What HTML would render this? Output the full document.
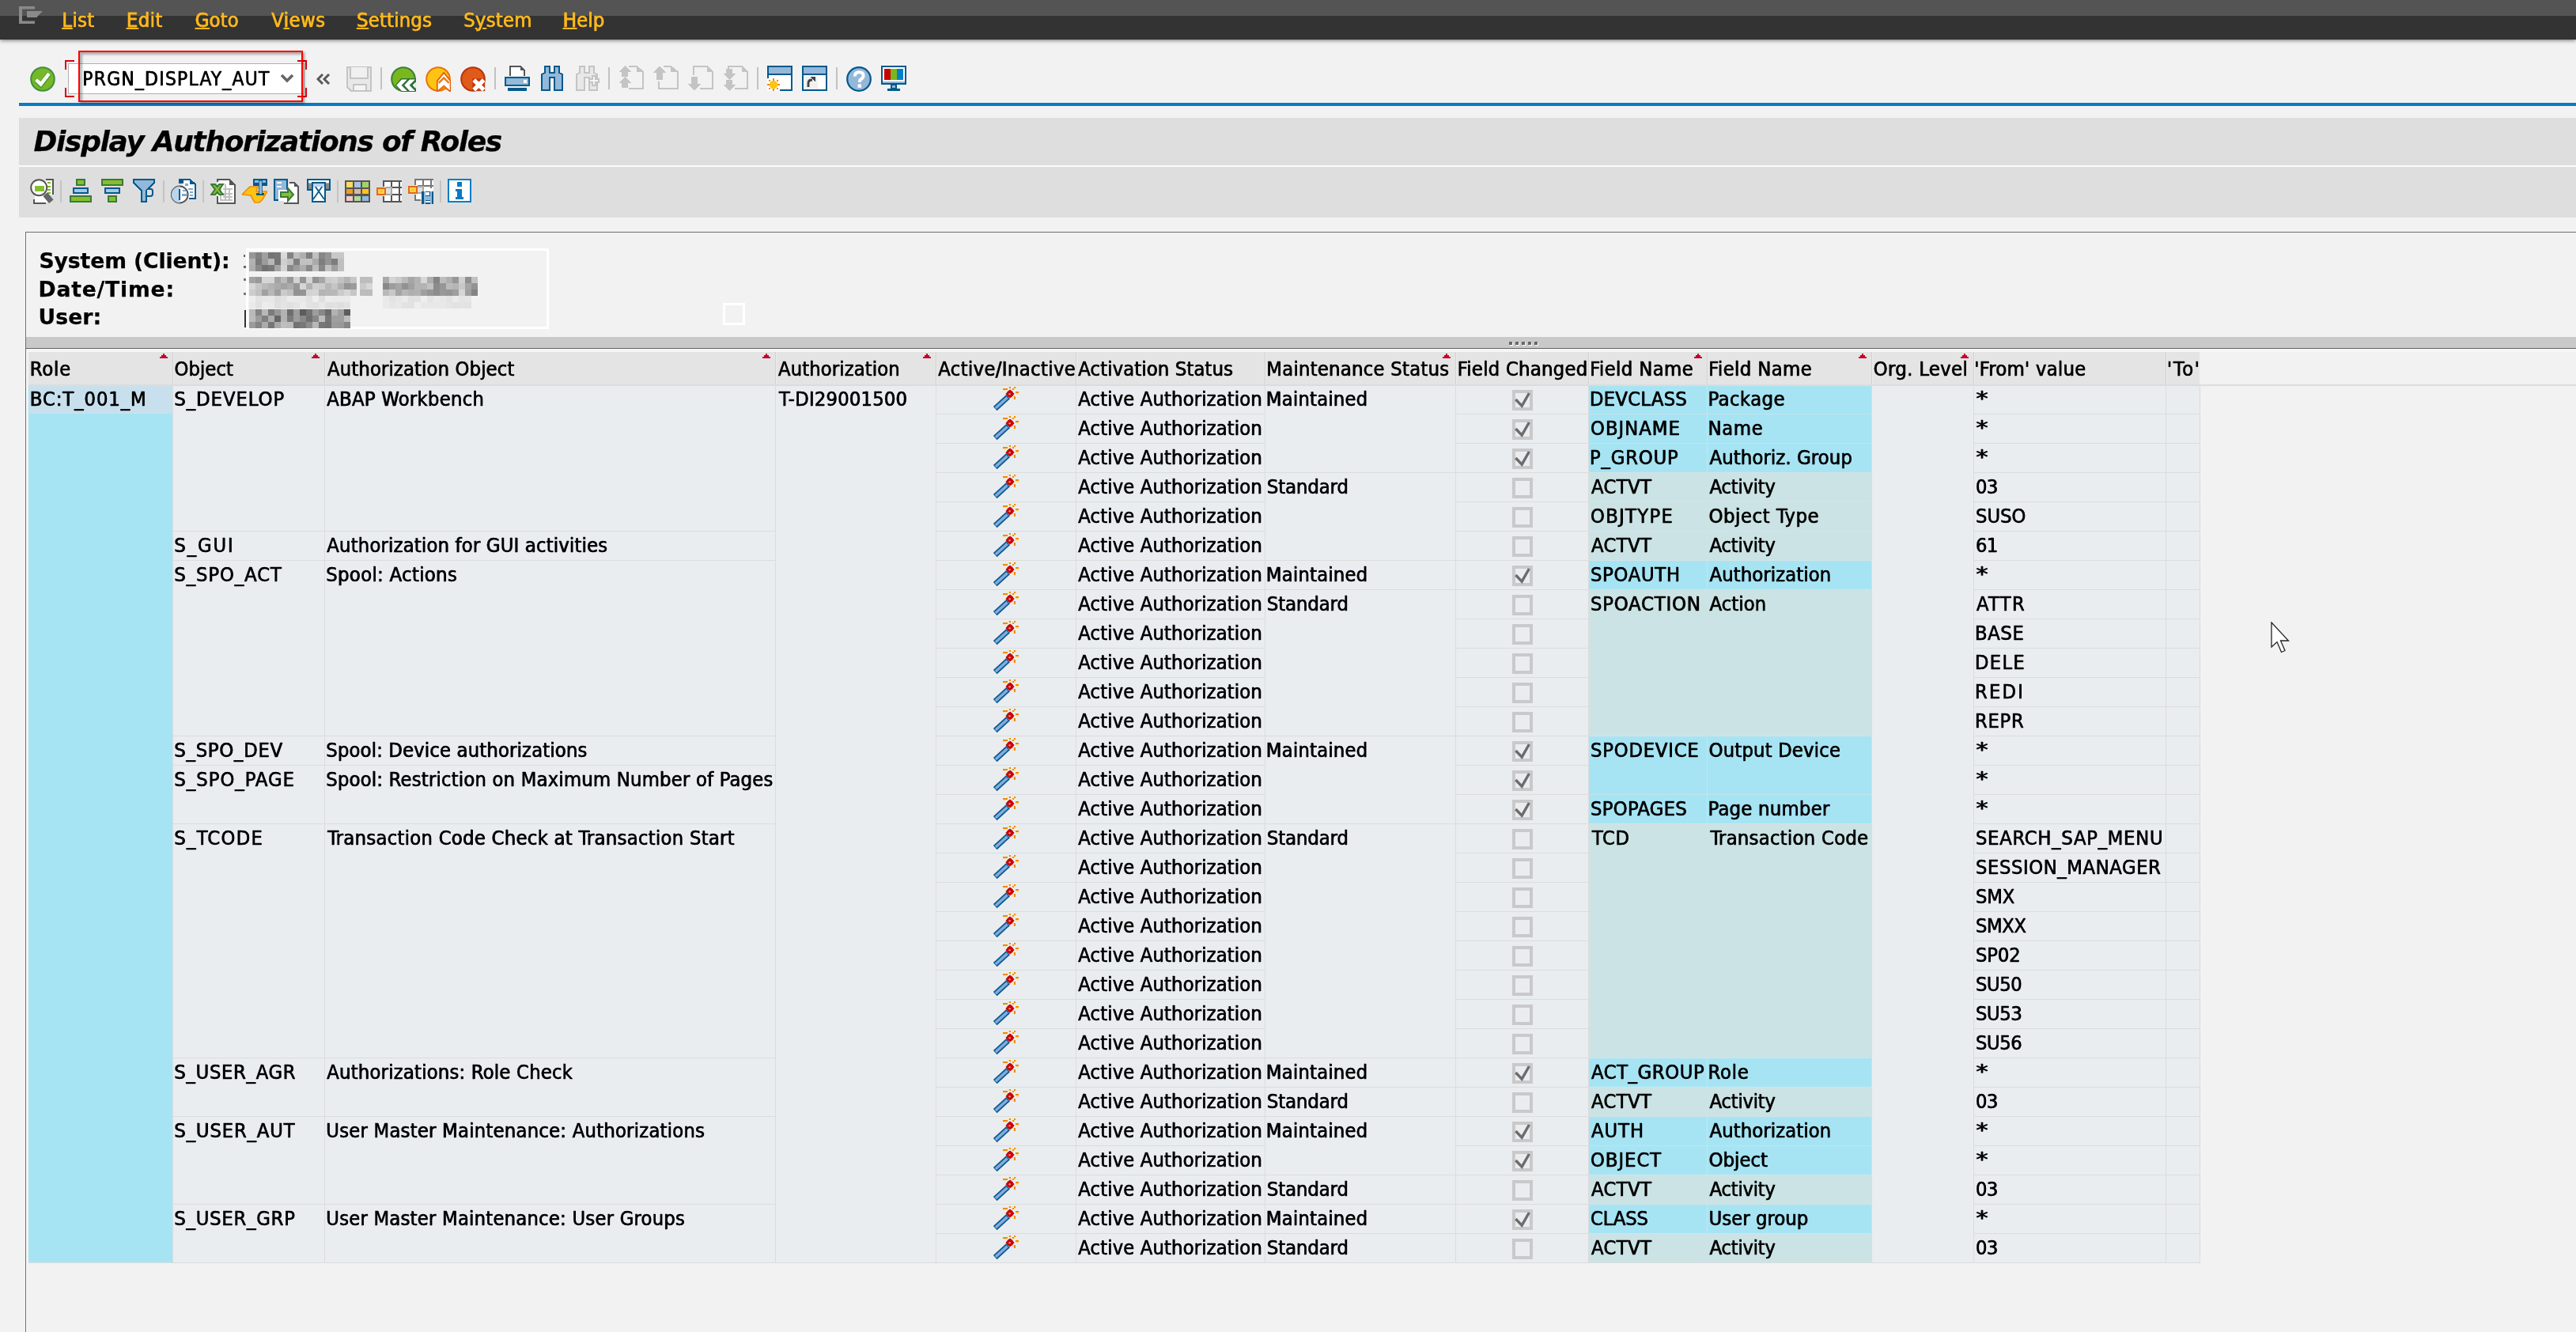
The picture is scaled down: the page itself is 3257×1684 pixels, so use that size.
<!DOCTYPE html>
<html><head><meta charset="utf-8"><title>Display Authorizations of Roles</title>
<style>
html,body{margin:0;padding:0}
body{width:3257px;height:1684px;background:#f2f2f2;position:relative;overflow:hidden;font-family:'DejaVu Sans Condensed','DejaVu Sans','Liberation Sans',sans-serif;font-stretch:condensed}
body div{position:absolute}
.t{position:absolute;white-space:pre;display:block;-webkit-text-stroke:0.3px #000;text-shadow:0.6px 0 0 currentColor}
svg{display:block}
u{text-decoration:underline;text-decoration-thickness:1.5px;text-underline-offset:1px}
#tx{left:0;top:0;width:3257px;height:1684px;will-change:transform}
</style></head><body>
<div style="left:0px;top:0px;width:3257px;height:50px;background:linear-gradient(#545454 0,#545454 20px,#333 20px,#333 100%);box-shadow:0 1px 5px rgba(0,0,0,.55);"></div>
<div style="left:24px;top:8px"><svg width="31" height="22" viewBox="0 0 31 22"><path d="M20 0 H0 V22 H20 V18.5 H4 V3.5 H20 Z" fill="#8a8a8a"/><path d="M10 6 H30 L23 13 V14 H10 Z" fill="#8a8a8a"/></svg></div>
<div style="left:24px;top:130px;width:3233px;height:4px;background:#0a7ac2;"></div>
<div style="left:38px;top:84px"><svg width="32" height="32" viewBox="0 0 16 16"><circle cx="8" cy="8" r="7.4" fill="#76b82a" stroke="#3f8f3c" stroke-width="1"/><path d="M3.6 8.6 L6.8 11.6 L12.2 4.6" fill="none" stroke="#4c9a2a" stroke-width="3.2"/><path d="M3.8 8.4 L6.8 11.2 L12 4.6" fill="none" stroke="#fff" stroke-width="2.2"/></svg></div>
<div style="left:86px;top:80px;width:299px;height:39px;background:#fff;border:1px solid #b0b0b0;box-sizing:border-box;"></div>
<div style="left:82px;top:76px;width:12px;height:12px;background:transparent;box-sizing:border-box;border-left:2px solid #d8000f;border-top:2px solid #d8000f;"></div>
<div style="left:82px;top:111px;width:12px;height:12px;background:transparent;box-sizing:border-box;border-left:2px solid #d8000f;border-bottom:2px solid #d8000f;"></div>
<div style="left:376px;top:76px;width:12px;height:12px;background:transparent;box-sizing:border-box;border-right:2px solid #d8000f;border-top:2px solid #d8000f;"></div>
<div style="left:376px;top:111px;width:12px;height:12px;background:transparent;box-sizing:border-box;border-right:2px solid #d8000f;border-bottom:2px solid #d8000f;"></div>
<div style="left:99px;top:64px;width:284px;height:65px;background:transparent;box-sizing:border-box;border:2px solid #f00;box-shadow:inset 3px 3px 3px rgba(0,0,0,.28), 2px 2px 3px rgba(0,0,0,.35);"></div>
<div style="left:354px;top:92px"><svg width="18" height="13" viewBox="0 0 18 13"><path d="M2 3 L9 10 L16 3" fill="none" stroke="#666" stroke-width="3.6"/></svg></div>
<div style="left:400px;top:93px"><svg width="18" height="14" viewBox="0 0 18 14"><path d="M8 1 L2 7 L8 13 M16 1 L10 7 L16 13" fill="none" stroke="#595959" stroke-width="3"/></svg></div>
<div style="left:438px;top:84px"><svg width="32" height="32" viewBox="0 0 16 16" shape-rendering="crispEdges"><path d="M0.5 0.5 H15.5 V15.5 H3 L0.5 13 Z" fill="#e8e8e8" stroke="#c4c4c4"/><path d="M2.5 0.5 V7.5 H13.5 V0.5" fill="#f0f0f0" stroke="#c4c4c4"/><rect x="4.5" y="11.5" width="8" height="4" fill="#f4f4f4" stroke="#c4c4c4"/></svg></div>
<div style="left:481px;top:85px;width:2px;height:28px;background:#c2c2c2;"></div>
<div style="left:494px;top:84px"><svg width="32" height="32" viewBox="0 0 16 16"><circle cx="8" cy="8" r="7.4" fill="#7ab71f" stroke="#3a8038"/><path d="M6.6 7.5 H16 V16 H6.6 L2.8 11.9 Z" fill="#2f7038"/><path d="M7 8.2 H10.4 L6.8 11.9 L10.4 15.5 H7 L3.6 11.9 Z M12 8.2 H15.4 L11.8 11.9 L15.4 15.5 H12 L8.6 11.9 Z M15.9 9.8 V14 L13.8 11.9 Z" fill="#fff"/></svg></div>
<div style="left:538px;top:84px"><svg width="32" height="32" viewBox="0 0 16 16"><circle cx="8" cy="8" r="7.4" fill="#fdc414" stroke="#e9720c"/><path d="M7.4 9.2 L11.6 4 L15.8 9.2 V16 L11.6 12.4 L7.4 16 Z" fill="#fff" stroke="#e4600a" stroke-width="0.9"/><path d="M8.4 10.4 L11.6 7.2 L14.8 10.4" fill="none" stroke="#ec7a0c" stroke-width="1.2"/><path d="M9.6 14.6 L11.6 12.6 L13.6 14.6" fill="none" stroke="#ec7a0c" stroke-width="1"/></svg></div>
<div style="left:582px;top:84px"><svg width="32" height="32" viewBox="0 0 16 16"><circle cx="8" cy="8" r="7.4" fill="#df5b17" stroke="#b8320e"/><rect x="7.6" y="7.6" width="8" height="8" fill="#c23a10"/><path d="M8.6 8.6 L14.8 14.8 M14.8 8.6 L8.6 14.8" stroke="#fff" stroke-width="2.6"/></svg></div>
<div style="left:625px;top:85px;width:2px;height:28px;background:#c2c2c2;"></div>
<div style="left:638px;top:83px"><svg width="32" height="32" viewBox="0 0 16 16" shape-rendering="crispEdges"><path d="M3.5 6.5 V0.5 H10 L12.5 3 V6.5" fill="#fff" stroke="#555"/><path d="M10 0.5 V3 H12.5 Z" fill="#555"/><rect x="0.5" y="7.5" width="15" height="5" fill="#94b8da" stroke="#00598c"/><rect x="12" y="9" width="2" height="2" fill="#fff"/><rect x="2" y="14" width="12" height="2" fill="#00598c"/></svg></div>
<div style="left:684px;top:83px"><svg width="28" height="32" viewBox="0 0 14 16" shape-rendering="crispEdges"><path d="M2.5 0.5 H5.5 V4.5 H8.5 V0.5 H11.5 V4.5 L13.5 5.5 V15.5 H8.5 V7.5 H5.5 V15.5 H0.5 V5.5 L2.5 4.5 Z" fill="#94b8da" stroke="#00598c"/></svg></div>
<div style="left:728px;top:83px"><svg width="30" height="32" viewBox="0 0 15 16" shape-rendering="crispEdges"><path d="M2.5 0.5 H5.5 V4.5 H8.5 V0.5 H11.5 V4.5 L13.5 5.5 V15.5 H8.5 V7.5 H5.5 V15.5 H0.5 V5.5 L2.5 4.5 Z" fill="#e8e8e8" stroke="#c4c4c4"/><path d="M10.5 6.5 H12.5 V8.5 H14.5 V10.5 H12.5 V12.5 H10.5 V10.5 H8.5 V8.5 H10.5 Z" fill="#f4f4f4" stroke="#c4c4c4"/></svg></div>
<div style="left:769px;top:85px;width:2px;height:28px;background:#c2c2c2;"></div>
<div style="left:782px;top:83px"><svg width="32" height="32" viewBox="0 0 16 16" shape-rendering="crispEdges"><path d="M6.5 0.5 H11.5 L15.5 4 V14.5 H6.5" fill="none" stroke="#c4c4c4"/><path d="M11.5 0.5 V4 H15.5 Z" fill="#c4c4c4"/><path d="M4 0 L8 4 H6 V7 H2 V4 H0 Z" fill="#c4c4c4"/><path d="M4 7 L8 11 H6 V14 H2 V11 H0 Z" fill="#c4c4c4"/></svg></div>
<div style="left:826px;top:83px"><svg width="32" height="32" viewBox="0 0 16 16" shape-rendering="crispEdges"><path d="M6.5 0.5 H11 L15.5 4 V14.5 H3.5 V10" fill="none" stroke="#c4c4c4"/><path d="M11 0.5 V4 H15.5 Z" fill="#c4c4c4"/><path d="M4 0 L8 4.5 H6 V9 H2 V4.5 H0 Z" fill="#c4c4c4"/></svg></div>
<div style="left:870px;top:83px"><svg width="32" height="32" viewBox="0 0 16 16" shape-rendering="crispEdges"><path d="M3.5 6 V0.5 H12 L15.5 4 V14.5 H7.5" fill="none" stroke="#c4c4c4"/><path d="M12 0.5 V4 H15.5 Z" fill="#c4c4c4"/><path d="M4 16 L8 11.5 H6 V7 H2 V11.5 H0 Z" fill="#c4c4c4"/></svg></div>
<div style="left:914px;top:83px"><svg width="32" height="32" viewBox="0 0 16 16" shape-rendering="crispEdges"><path d="M3.5 2 V0.5 H12 L15.5 4 V14.5 H7.5" fill="none" stroke="#c4c4c4"/><path d="M12 0.5 V4 H15.5 Z" fill="#c4c4c4"/><path d="M4 9 L8 5 H6 V2 H2 V5 H0 Z" fill="#c4c4c4"/><path d="M4 16 L8 12 H6 V9 H2 V12 H0 Z" fill="#c4c4c4"/></svg></div>
<div style="left:957px;top:85px;width:2px;height:28px;background:#c2c2c2;"></div>
<div style="left:970px;top:83px"><svg width="32" height="32" viewBox="0 0 16 16" shape-rendering="crispEdges"><rect x="0.5" y="0.5" width="15" height="15" fill="#fff" stroke="#00598c"/><rect x="1" y="1" width="14" height="4" fill="#94b8da"/><rect x="0" y="5" width="16" height="1" fill="#00598c"/><rect x="0" y="8" width="8" height="8" fill="#f2f2f2"/><rect x="0" y="8" width="8" height="8" fill="#fff"/><circle cx="4" cy="12" r="2.6" fill="#fdc414" shape-rendering="auto"/><g fill="#f08c0a"><rect x="3.4" y="8" width="1.2" height="1.4"/><rect x="3.4" y="14.6" width="1.2" height="1.4"/><rect x="0" y="11.4" width="1.4" height="1.2"/><rect x="6.6" y="11.4" width="1.4" height="1.2"/><rect x="1" y="9" width="1.2" height="1.2"/><rect x="5.8" y="9" width="1.2" height="1.2"/><rect x="1" y="13.8" width="1.2" height="1.2"/><rect x="5.8" y="13.8" width="1.2" height="1.2"/></g></svg></div>
<div style="left:1014px;top:83px"><svg width="32" height="32" viewBox="0 0 16 16" shape-rendering="crispEdges"><rect x="0.5" y="0.5" width="15" height="15" fill="#fff" stroke="#00598c"/><rect x="1" y="1" width="14" height="4" fill="#94b8da"/><rect x="0" y="5" width="16" height="1" fill="#00598c"/><rect x="2" y="7" width="8" height="8" fill="#f0f0f0"/><path d="M4 13.5 V11 Q4 9 6.5 9" fill="none" stroke="#444" stroke-width="1.4" shape-rendering="auto"/><path d="M5 7 H8.4 V10.4 Z" fill="#444"/></svg></div>
<div style="left:1057px;top:85px;width:2px;height:28px;background:#c2c2c2;"></div>
<div style="left:1070px;top:84px"><svg width="32" height="32" viewBox="0 0 16 16"><circle cx="8" cy="8" r="7.4" fill="#94b8da" stroke="#00598c" stroke-width="1.1"/><path d="M5.4 6.2 Q5.4 3.6 8.2 3.6 Q10.8 3.6 10.8 5.8 Q10.8 7.2 9.4 8 Q8.4 8.6 8.4 10" fill="none" stroke="#fff" stroke-width="2"/><rect x="7.3" y="11.2" width="2.2" height="2.2" fill="#fff"/></svg></div>
<div style="left:1114px;top:83px"><svg width="32" height="32" viewBox="0 0 16 16" shape-rendering="crispEdges"><rect x="0.5" y="0.5" width="15" height="11" fill="#fff" stroke="#00598c"/><rect x="1" y="10" width="14" height="1" fill="#94b8da"/><rect x="2" y="2" width="4" height="7" fill="#cc0000"/><rect x="6" y="2" width="4" height="7" fill="#78b71e"/><rect x="10" y="2" width="4" height="7" fill="#0080c8"/><rect x="6.5" y="12" width="3" height="2.5" fill="#94b8da" stroke="#00598c"/><rect x="4" y="14.5" width="8" height="1.5" fill="#00598c"/></svg></div>
<div style="left:24px;top:149px;width:3233px;height:60px;background:#dedede;"></div>
<div style="left:24px;top:209px;width:3233px;height:2px;background:#fbfbfb;"></div>
<div style="left:24px;top:211px;width:3233px;height:64px;background:#dedede;"></div>
<div style="left:38px;top:226px"><svg width="32" height="32" viewBox="0 0 16 16" shape-rendering="crispEdges"><path d="M10 0.5 H14.5 V10 M2.5 13 V15.5 H10" fill="none" stroke="#555"/><rect x="10" y="1" width="4" height="9" fill="#fff"/><rect x="3" y="10" width="8" height="5" fill="#fff"/><g fill="#7ab71f"><rect x="11" y="2" width="2" height="1"/><rect x="11" y="4.5" width="2" height="1"/><rect x="11" y="6.5" width="2" height="1"/><rect x="11" y="8.5" width="2" height="1"/></g><circle cx="5.6" cy="5.6" r="5" fill="#fff" stroke="#555" stroke-width="1" shape-rendering="auto"/><rect x="3" y="4.5" width="6" height="3.5" fill="#86bf2e"/><path d="M9.6 9.8 L13.4 14.4" stroke="#666" stroke-width="3.6" shape-rendering="auto"/></svg></div>
<div style="left:76px;top:228px;width:2px;height:28px;background:#c4c4c4;"></div>
<div style="left:88px;top:226px"><svg width="28" height="32" viewBox="0 0 14 16" shape-rendering="crispEdges"><rect x="4.5" y="0.5" width="5" height="3.5" fill="#86bf2e" stroke="#3a7a3a"/><rect x="2.5" y="6.0" width="9" height="3" fill="#a9c7e5" stroke="#00598c"/><rect x="0.5" y="11.0" width="13" height="3.5" fill="#86bf2e" stroke="#3a7a3a"/></svg></div>
<div style="left:128px;top:226px"><svg width="28" height="32" viewBox="0 0 14 16" shape-rendering="crispEdges"><rect x="0.5" y="0.5" width="13" height="3.5" fill="#86bf2e" stroke="#3a7a3a"/><rect x="2.5" y="6.0" width="9" height="3" fill="#a9c7e5" stroke="#00598c"/><rect x="4.5" y="11.0" width="5" height="3.5" fill="#86bf2e" stroke="#3a7a3a"/></svg></div>
<div style="left:168px;top:226px"><svg width="28" height="32" viewBox="0 0 14 16" shape-rendering="crispEdges"><path d="M0.5 0.5 H13.5 V2.5 L8.5 7.5 V14.5 H5.5 V7.5 L0.5 2.5 Z" fill="#94b8da" stroke="#00598c"/><path d="M9 6.5 H11.5 Q12.5 6.5 12.5 8 V9.5 Q12.5 11 11 11 H9" fill="#e0e0e0" stroke="#00598c" shape-rendering="auto"/></svg></div>
<div style="left:206px;top:228px;width:2px;height:28px;background:#c4c4c4;"></div>
<div style="left:216px;top:226px"><svg width="32" height="32" viewBox="0 0 16 16" shape-rendering="crispEdges"><path d="M5.5 0.5 H12 L15.5 3.5 V12.5 H11.5" fill="#fff" stroke="#00598c"/><path d="M5 0 H8 V3 H5 Z" fill="#00598c"/><path d="M12 0.5 V3.5 H15.5 Z" fill="#00598c"/><g fill="#7fa8cc"><rect x="9" y="3" width="2" height="1.4"/><rect x="11" y="6" width="3" height="1"/><rect x="12" y="8" width="2" height="1"/><rect x="12" y="10" width="2" height="1"/></g><circle cx="5.6" cy="10" r="5.2" fill="#fff" stroke="#555" shape-rendering="auto"/><path d="M5.6 4.8 A5.2 5.2 0 0 0 5.6 15.2 Z" fill="#bcd4ea" shape-rendering="auto"/><rect x="5" y="6.5" width="1.2" height="7" fill="#00598c"/><rect x="7" y="9.5" width="3" height="1.6" fill="#7fa8cc"/><rect x="7.5" y="7" width="2" height="1" fill="#7fa8cc"/></svg></div>
<div style="left:256px;top:228px;width:2px;height:28px;background:#c4c4c4;"></div>
<div style="left:266px;top:226px"><svg width="32" height="32" viewBox="0 0 16 16" shape-rendering="crispEdges"><path d="M4.5 2 V0.5 H12 L15.5 4 V15.5 H4.5 V11" fill="#fff" stroke="#555"/><path d="M12 0.5 V4 H15.5 Z" fill="#555"/><g stroke="#c0c0c0" fill="none"><path d="M6.5 4 V13.5 H14 M9.5 3.5 V13.5 M12 6 V13.5 M8 6.5 H14 M8 9.5 H14 M8 11.5 H14"/></g><path d="M0.5 3.5 H3 L4.3 5 L5.6 3.5 H8 L5.6 6.8 L8 10 H5.6 L4.3 8.4 L3 10 H0.5 L3 6.8 Z" fill="#86bf2e" stroke="#3a7a3a" shape-rendering="auto"/></svg></div>
<div style="left:306px;top:226px"><svg width="32" height="32" viewBox="0 0 16 16" shape-rendering="crispEdges"><path d="M0 10 L5 5 H10 L9 8 H16 L13 13 L11 15 H8 L5.5 10.5 Z" fill="#fdc414" stroke="#f08c0a" stroke-width="0.8" shape-rendering="auto"/><rect x="7" y="0" width="9" height="4.5" fill="#00598c"/><rect x="9" y="9" width="5" height="1.6" fill="#00598c"/><rect x="8" y="1" width="7" height="1.5" fill="#94b8da"/><rect x="10.5" y="1" width="2" height="8.5" fill="#94b8da" stroke="#00598c" stroke-width="0.4"/></svg></div>
<div style="left:346px;top:226px"><svg width="32" height="32" viewBox="0 0 16 16" shape-rendering="crispEdges"><path d="M10 2.5 H13 L15.5 5 V15.5 H6.5" fill="#fff" stroke="#555"/><path d="M13 2.5 V5 H15.5 Z" fill="#555"/><path d="M0.5 0.5 H8.5 V13.5 H0.5 Z" fill="#94b8da" stroke="#00598c"/><rect x="3" y="7" width="6" height="7" fill="#fff"/><rect x="2" y="2" width="3" height="1" fill="#fff"/><rect x="2" y="4.5" width="3" height="1" fill="#fff"/><path d="M4.5 8.5 H9 V6 L12.5 10 L9 14 V11.5 H4.5 Z" fill="#86bf2e" stroke="#3a7a3a" shape-rendering="auto"/></svg></div>
<div style="left:388px;top:226px"><svg width="30" height="32" viewBox="0 0 15 16" shape-rendering="crispEdges"><rect x="0.5" y="0.5" width="14" height="6.5" fill="#94b8da" stroke="#00598c"/><rect x="1" y="1" width="13" height="1.4" fill="#fff"/><rect x="1" y="3" width="2" height="3.5" fill="#888"/><rect x="12" y="3" width="2" height="3.5" fill="#888"/><rect x="3.5" y="2.5" width="8" height="12" fill="#fff" stroke="#00598c"/><path d="M4 3 L11 13 M11 3 L4 13" stroke="#00598c" stroke-width="0.9" shape-rendering="auto"/><rect x="4" y="3" width="7" height="2" fill="#bcd4ea"/></svg></div>
<div style="left:426px;top:228px;width:2px;height:28px;background:#c4c4c4;"></div>
<div style="left:436px;top:228px"><svg width="32" height="28" viewBox="0 0 16 14" shape-rendering="crispEdges"><rect x="0" y="0" width="16" height="14" fill="#555"/><rect x="1" y="1.0" width="4" height="3.3" fill="#ffd966"/><rect x="6" y="1.0" width="4" height="3.3" fill="#a6c4e2"/><rect x="11" y="1.0" width="4" height="3.3" fill="#a4d16c"/><rect x="1" y="5.4" width="4" height="3.3" fill="#f39c1a"/><rect x="6" y="5.4" width="4" height="3.3" fill="#d9b8ac"/><rect x="11" y="5.4" width="4" height="3.3" fill="#fdc414"/><rect x="1" y="9.8" width="4" height="3.3" fill="#f7c8cc"/><rect x="6" y="9.8" width="4" height="3.3" fill="#acd99c"/><rect x="11" y="9.8" width="4" height="3.3" fill="#94b8da"/></svg></div>
<div style="left:476px;top:228px"><svg width="32" height="28" viewBox="0 0 16 14" shape-rendering="crispEdges"><rect x="4.5" y="0.5" width="11.5" height="13" fill="#fff"/><path d="M4.5 4 V0.5 H16 M4.5 10 V13.5 H16 M9.5 0.5 V13.5 M14.5 0.5 V13.5 M6 4.5 H16 M6 9 H16" fill="none" stroke="#555"/><path d="M6 4.5 H9.5 V9 H6" fill="#e0e0e0" stroke="#aaa"/><rect x="0.5" y="5" width="5" height="4" fill="#ffd24a" stroke="#e06a1c"/><rect x="2" y="6.5" width="2" height="1" fill="#fdc414"/></svg></div>
<div style="left:516px;top:226px"><svg width="32" height="32" viewBox="0 0 16 16" shape-rendering="crispEdges"><rect x="4.5" y="0.5" width="11.5" height="13" fill="#fff"/><path d="M4.5 4 V0.5 H16 M4.5 10 V13.5 H8 M9.5 0.5 V6 M14.5 0.5 V6 M6 4.5 H16" fill="none" stroke="#777"/><path d="M6 5 H9.5 V9 H6" fill="#e0e0e0" stroke="#aaa"/><rect x="0.5" y="5" width="5" height="4" fill="#ffd24a" stroke="#e06a1c"/><rect x="2" y="6.5" width="2" height="1" fill="#fdc414"/><rect x="8.5" y="8" width="7.5" height="8" fill="#00598c"/><rect x="10" y="8" width="1" height="8" fill="#94b8da"/><rect x="14" y="8" width="1" height="8" fill="#94b8da"/><rect x="10" y="11" width="5" height="2.6" fill="#94b8da"/><rect x="11" y="8.6" width="2.4" height="2" fill="#fff"/><rect x="11" y="14" width="3" height="1" fill="#fff"/></svg></div>
<div style="left:556px;top:228px;width:2px;height:28px;background:#c4c4c4;"></div>
<div style="left:566px;top:226px"><svg width="30" height="30" viewBox="0 0 15 15" shape-rendering="crispEdges"><rect x="0.5" y="0.5" width="14" height="14" fill="#fff" stroke="#007cc5"/><rect x="6" y="2" width="3" height="3" fill="#007cc5"/><path d="M5 6.5 H9 V11.5 H10 V13 H5 V11.5 H6 V8 H5 Z" fill="#007cc5"/></svg></div>
<div style="left:32px;top:293px;width:3225px;height:1px;background:#6e6e6e;"></div>
<div style="left:32px;top:293px;width:1px;height:1391px;background:#6e6e6e;"></div>
<div style="left:33px;top:294px;width:1px;height:1390px;background:#fafafa;"></div>
<div style="left:311px;top:314px;width:383px;height:102px;background:transparent;box-sizing:border-box;border:3px solid #fff;"></div>
<div style="left:914px;top:383px;width:28px;height:28px;background:transparent;box-sizing:border-box;border:3px solid #fff;"></div>
<div style="left:0;top:0;filter:blur(0.6px)"><div style="left:315px;top:319px;width:8px;height:8px;background:rgb(151,151,151);"></div><div style="left:323px;top:319px;width:8px;height:8px;background:rgb(129,129,129);"></div><div style="left:331px;top:319px;width:8px;height:8px;background:rgb(160,160,160);"></div><div style="left:339px;top:319px;width:8px;height:8px;background:rgb(116,116,116);"></div><div style="left:347px;top:319px;width:8px;height:8px;background:rgb(119,119,119);"></div><div style="left:315px;top:327px;width:8px;height:8px;background:rgb(178,178,178);"></div><div style="left:323px;top:327px;width:8px;height:8px;background:rgb(122,122,122);"></div><div style="left:331px;top:327px;width:8px;height:8px;background:rgb(156,156,156);"></div><div style="left:339px;top:327px;width:8px;height:8px;background:rgb(184,184,184);"></div><div style="left:347px;top:327px;width:8px;height:8px;background:rgb(117,117,117);"></div><div style="left:315px;top:335px;width:8px;height:8px;background:rgb(174,174,174);"></div><div style="left:323px;top:335px;width:8px;height:8px;background:rgb(137,137,137);"></div><div style="left:331px;top:335px;width:8px;height:8px;background:rgb(114,114,114);"></div><div style="left:339px;top:335px;width:8px;height:8px;background:rgb(121,121,121);"></div><div style="left:347px;top:335px;width:8px;height:8px;background:rgb(165,165,165);"></div><div style="left:355px;top:319px;width:8px;height:8px;background:rgb(218,218,218);"></div><div style="left:355px;top:327px;width:8px;height:8px;background:rgb(207,207,207);"></div><div style="left:355px;top:335px;width:8px;height:8px;background:rgb(212,212,212);"></div><div style="left:363px;top:319px;width:8px;height:8px;background:rgb(131,131,131);"></div><div style="left:371px;top:319px;width:8px;height:8px;background:rgb(190,190,190);"></div><div style="left:379px;top:319px;width:8px;height:8px;background:rgb(174,174,174);"></div><div style="left:387px;top:319px;width:8px;height:8px;background:rgb(127,127,127);"></div><div style="left:395px;top:319px;width:8px;height:8px;background:rgb(192,192,192);"></div><div style="left:403px;top:319px;width:8px;height:8px;background:rgb(135,135,135);"></div><div style="left:411px;top:319px;width:8px;height:8px;background:rgb(148,148,148);"></div><div style="left:419px;top:319px;width:8px;height:8px;background:rgb(200,200,200);"></div><div style="left:427px;top:319px;width:8px;height:8px;background:rgb(200,200,200);"></div><div style="left:363px;top:327px;width:8px;height:8px;background:rgb(194,194,194);"></div><div style="left:371px;top:327px;width:8px;height:8px;background:rgb(127,127,127);"></div><div style="left:379px;top:327px;width:8px;height:8px;background:rgb(193,193,193);"></div><div style="left:387px;top:327px;width:8px;height:8px;background:rgb(194,194,194);"></div><div style="left:395px;top:327px;width:8px;height:8px;background:rgb(170,170,170);"></div><div style="left:403px;top:327px;width:8px;height:8px;background:rgb(126,126,126);"></div><div style="left:411px;top:327px;width:8px;height:8px;background:rgb(148,148,148);"></div><div style="left:419px;top:327px;width:8px;height:8px;background:rgb(125,125,125);"></div><div style="left:427px;top:327px;width:8px;height:8px;background:rgb(191,191,191);"></div><div style="left:363px;top:335px;width:8px;height:8px;background:rgb(137,137,137);"></div><div style="left:371px;top:335px;width:8px;height:8px;background:rgb(157,157,157);"></div><div style="left:379px;top:335px;width:8px;height:8px;background:rgb(173,173,173);"></div><div style="left:387px;top:335px;width:8px;height:8px;background:rgb(138,138,138);"></div><div style="left:395px;top:335px;width:8px;height:8px;background:rgb(189,189,189);"></div><div style="left:403px;top:335px;width:8px;height:8px;background:rgb(135,135,135);"></div><div style="left:411px;top:335px;width:8px;height:8px;background:rgb(193,193,193);"></div><div style="left:419px;top:335px;width:8px;height:8px;background:rgb(159,159,159);"></div><div style="left:427px;top:335px;width:8px;height:8px;background:rgb(191,191,191);"></div><div style="left:315px;top:350px;width:8px;height:8px;background:rgb(163,163,163);"></div><div style="left:323px;top:350px;width:8px;height:8px;background:rgb(153,153,153);"></div><div style="left:331px;top:350px;width:8px;height:8px;background:rgb(214,214,214);"></div><div style="left:339px;top:350px;width:8px;height:8px;background:rgb(213,213,213);"></div><div style="left:347px;top:350px;width:8px;height:8px;background:rgb(164,164,164);"></div><div style="left:355px;top:350px;width:8px;height:8px;background:rgb(187,187,187);"></div><div style="left:363px;top:350px;width:8px;height:8px;background:rgb(152,152,152);"></div><div style="left:371px;top:350px;width:8px;height:8px;background:rgb(210,210,210);"></div><div style="left:379px;top:350px;width:8px;height:8px;background:rgb(148,148,148);"></div><div style="left:387px;top:350px;width:8px;height:8px;background:rgb(212,212,212);"></div><div style="left:395px;top:350px;width:8px;height:8px;background:rgb(147,147,147);"></div><div style="left:403px;top:350px;width:8px;height:8px;background:rgb(166,166,166);"></div><div style="left:411px;top:350px;width:8px;height:8px;background:rgb(203,203,203);"></div><div style="left:419px;top:350px;width:8px;height:8px;background:rgb(208,208,208);"></div><div style="left:427px;top:350px;width:8px;height:8px;background:rgb(194,194,194);"></div><div style="left:435px;top:350px;width:8px;height:8px;background:rgb(180,180,180);"></div><div style="left:443px;top:350px;width:8px;height:8px;background:rgb(199,199,199);"></div><div style="left:315px;top:358px;width:8px;height:8px;background:rgb(214,214,214);"></div><div style="left:323px;top:358px;width:8px;height:8px;background:rgb(198,198,198);"></div><div style="left:331px;top:358px;width:8px;height:8px;background:rgb(186,186,186);"></div><div style="left:339px;top:358px;width:8px;height:8px;background:rgb(178,178,178);"></div><div style="left:347px;top:358px;width:8px;height:8px;background:rgb(171,171,171);"></div><div style="left:355px;top:358px;width:8px;height:8px;background:rgb(163,163,163);"></div><div style="left:363px;top:358px;width:8px;height:8px;background:rgb(171,171,171);"></div><div style="left:371px;top:358px;width:8px;height:8px;background:rgb(150,150,150);"></div><div style="left:379px;top:358px;width:8px;height:8px;background:rgb(213,213,213);"></div><div style="left:387px;top:358px;width:8px;height:8px;background:rgb(178,178,178);"></div><div style="left:395px;top:358px;width:8px;height:8px;background:rgb(207,207,207);"></div><div style="left:403px;top:358px;width:8px;height:8px;background:rgb(203,203,203);"></div><div style="left:411px;top:358px;width:8px;height:8px;background:rgb(183,183,183);"></div><div style="left:419px;top:358px;width:8px;height:8px;background:rgb(197,197,197);"></div><div style="left:427px;top:358px;width:8px;height:8px;background:rgb(176,176,176);"></div><div style="left:435px;top:358px;width:8px;height:8px;background:rgb(149,149,149);"></div><div style="left:443px;top:358px;width:8px;height:8px;background:rgb(155,155,155);"></div><div style="left:315px;top:366px;width:8px;height:8px;background:rgb(205,205,205);"></div><div style="left:323px;top:366px;width:8px;height:8px;background:rgb(193,193,193);"></div><div style="left:331px;top:366px;width:8px;height:8px;background:rgb(161,161,161);"></div><div style="left:339px;top:366px;width:8px;height:8px;background:rgb(183,183,183);"></div><div style="left:347px;top:366px;width:8px;height:8px;background:rgb(159,159,159);"></div><div style="left:355px;top:366px;width:8px;height:8px;background:rgb(202,202,202);"></div><div style="left:363px;top:366px;width:8px;height:8px;background:rgb(193,193,193);"></div><div style="left:371px;top:366px;width:8px;height:8px;background:rgb(145,145,145);"></div><div style="left:379px;top:366px;width:8px;height:8px;background:rgb(149,149,149);"></div><div style="left:387px;top:366px;width:8px;height:8px;background:rgb(211,211,211);"></div><div style="left:395px;top:366px;width:8px;height:8px;background:rgb(213,213,213);"></div><div style="left:403px;top:366px;width:8px;height:8px;background:rgb(180,180,180);"></div><div style="left:411px;top:366px;width:8px;height:8px;background:rgb(183,183,183);"></div><div style="left:419px;top:366px;width:8px;height:8px;background:rgb(184,184,184);"></div><div style="left:427px;top:366px;width:8px;height:8px;background:rgb(203,203,203);"></div><div style="left:435px;top:366px;width:8px;height:8px;background:rgb(214,214,214);"></div><div style="left:443px;top:366px;width:8px;height:8px;background:rgb(198,198,198);"></div><div style="left:455px;top:350px;width:8px;height:8px;background:rgb(189,189,189);"></div><div style="left:463px;top:350px;width:8px;height:8px;background:rgb(190,190,190);"></div><div style="left:455px;top:358px;width:8px;height:8px;background:rgb(202,202,202);"></div><div style="left:463px;top:358px;width:8px;height:8px;background:rgb(215,215,215);"></div><div style="left:455px;top:366px;width:8px;height:8px;background:rgb(189,189,189);"></div><div style="left:463px;top:366px;width:8px;height:8px;background:rgb(188,188,188);"></div><div style="left:484px;top:350px;width:8px;height:8px;background:rgb(169,169,169);"></div><div style="left:492px;top:350px;width:8px;height:8px;background:rgb(212,212,212);"></div><div style="left:500px;top:350px;width:8px;height:8px;background:rgb(203,203,203);"></div><div style="left:508px;top:350px;width:8px;height:8px;background:rgb(187,187,187);"></div><div style="left:516px;top:350px;width:8px;height:8px;background:rgb(166,166,166);"></div><div style="left:524px;top:350px;width:8px;height:8px;background:rgb(179,179,179);"></div><div style="left:532px;top:350px;width:8px;height:8px;background:rgb(215,215,215);"></div><div style="left:540px;top:350px;width:8px;height:8px;background:rgb(174,174,174);"></div><div style="left:548px;top:350px;width:8px;height:8px;background:rgb(132,132,132);"></div><div style="left:556px;top:350px;width:8px;height:8px;background:rgb(189,189,189);"></div><div style="left:564px;top:350px;width:8px;height:8px;background:rgb(175,175,175);"></div><div style="left:572px;top:350px;width:8px;height:8px;background:rgb(151,151,151);"></div><div style="left:580px;top:350px;width:8px;height:8px;background:rgb(208,208,208);"></div><div style="left:588px;top:350px;width:8px;height:8px;background:rgb(144,144,144);"></div><div style="left:596px;top:350px;width:8px;height:8px;background:rgb(193,193,193);"></div><div style="left:484px;top:358px;width:8px;height:8px;background:rgb(137,137,137);"></div><div style="left:492px;top:358px;width:8px;height:8px;background:rgb(157,157,157);"></div><div style="left:500px;top:358px;width:8px;height:8px;background:rgb(166,166,166);"></div><div style="left:508px;top:358px;width:8px;height:8px;background:rgb(146,146,146);"></div><div style="left:516px;top:358px;width:8px;height:8px;background:rgb(161,161,161);"></div><div style="left:524px;top:358px;width:8px;height:8px;background:rgb(180,180,180);"></div><div style="left:532px;top:358px;width:8px;height:8px;background:rgb(180,180,180);"></div><div style="left:540px;top:358px;width:8px;height:8px;background:rgb(193,193,193);"></div><div style="left:548px;top:358px;width:8px;height:8px;background:rgb(140,140,140);"></div><div style="left:556px;top:358px;width:8px;height:8px;background:rgb(151,151,151);"></div><div style="left:564px;top:358px;width:8px;height:8px;background:rgb(187,187,187);"></div><div style="left:572px;top:358px;width:8px;height:8px;background:rgb(181,181,181);"></div><div style="left:580px;top:358px;width:8px;height:8px;background:rgb(200,200,200);"></div><div style="left:588px;top:358px;width:8px;height:8px;background:rgb(165,165,165);"></div><div style="left:596px;top:358px;width:8px;height:8px;background:rgb(147,147,147);"></div><div style="left:484px;top:366px;width:8px;height:8px;background:rgb(185,185,185);"></div><div style="left:492px;top:366px;width:8px;height:8px;background:rgb(200,200,200);"></div><div style="left:500px;top:366px;width:8px;height:8px;background:rgb(165,165,165);"></div><div style="left:508px;top:366px;width:8px;height:8px;background:rgb(183,183,183);"></div><div style="left:516px;top:366px;width:8px;height:8px;background:rgb(175,175,175);"></div><div style="left:524px;top:366px;width:8px;height:8px;background:rgb(178,178,178);"></div><div style="left:532px;top:366px;width:8px;height:8px;background:rgb(159,159,159);"></div><div style="left:540px;top:366px;width:8px;height:8px;background:rgb(149,149,149);"></div><div style="left:548px;top:366px;width:8px;height:8px;background:rgb(140,140,140);"></div><div style="left:556px;top:366px;width:8px;height:8px;background:rgb(152,152,152);"></div><div style="left:564px;top:366px;width:8px;height:8px;background:rgb(149,149,149);"></div><div style="left:572px;top:366px;width:8px;height:8px;background:rgb(159,159,159);"></div><div style="left:580px;top:366px;width:8px;height:8px;background:rgb(214,214,214);"></div><div style="left:588px;top:366px;width:8px;height:8px;background:rgb(159,159,159);"></div><div style="left:596px;top:366px;width:8px;height:8px;background:rgb(131,131,131);"></div><div style="left:315px;top:374px;width:8px;height:8px;background:rgb(237,237,237);"></div><div style="left:323px;top:374px;width:8px;height:8px;background:rgb(227,227,227);"></div><div style="left:331px;top:374px;width:8px;height:8px;background:rgb(230,230,230);"></div><div style="left:339px;top:374px;width:8px;height:8px;background:rgb(231,231,231);"></div><div style="left:347px;top:374px;width:8px;height:8px;background:rgb(222,222,222);"></div><div style="left:355px;top:374px;width:8px;height:8px;background:rgb(226,226,226);"></div><div style="left:363px;top:374px;width:8px;height:8px;background:rgb(235,235,235);"></div><div style="left:371px;top:374px;width:8px;height:8px;background:rgb(233,233,233);"></div><div style="left:379px;top:374px;width:8px;height:8px;background:rgb(232,232,232);"></div><div style="left:387px;top:374px;width:8px;height:8px;background:rgb(226,226,226);"></div><div style="left:395px;top:374px;width:8px;height:8px;background:rgb(238,238,238);"></div><div style="left:403px;top:374px;width:8px;height:8px;background:rgb(223,223,223);"></div><div style="left:411px;top:374px;width:8px;height:8px;background:rgb(236,236,236);"></div><div style="left:419px;top:374px;width:8px;height:8px;background:rgb(234,234,234);"></div><div style="left:427px;top:374px;width:8px;height:8px;background:rgb(234,234,234);"></div><div style="left:435px;top:374px;width:8px;height:8px;background:rgb(234,234,234);"></div><div style="left:315px;top:382px;width:8px;height:8px;background:rgb(234,234,234);"></div><div style="left:323px;top:382px;width:8px;height:8px;background:rgb(225,225,225);"></div><div style="left:331px;top:382px;width:8px;height:8px;background:rgb(237,237,237);"></div><div style="left:339px;top:382px;width:8px;height:8px;background:rgb(234,234,234);"></div><div style="left:347px;top:382px;width:8px;height:8px;background:rgb(223,223,223);"></div><div style="left:355px;top:382px;width:8px;height:8px;background:rgb(228,228,228);"></div><div style="left:363px;top:382px;width:8px;height:8px;background:rgb(224,224,224);"></div><div style="left:371px;top:382px;width:8px;height:8px;background:rgb(228,228,228);"></div><div style="left:379px;top:382px;width:8px;height:8px;background:rgb(236,236,236);"></div><div style="left:387px;top:382px;width:8px;height:8px;background:rgb(227,227,227);"></div><div style="left:395px;top:382px;width:8px;height:8px;background:rgb(225,225,225);"></div><div style="left:403px;top:382px;width:8px;height:8px;background:rgb(232,232,232);"></div><div style="left:411px;top:382px;width:8px;height:8px;background:rgb(223,223,223);"></div><div style="left:419px;top:382px;width:8px;height:8px;background:rgb(225,225,225);"></div><div style="left:427px;top:382px;width:8px;height:8px;background:rgb(222,222,222);"></div><div style="left:435px;top:382px;width:8px;height:8px;background:rgb(226,226,226);"></div><div style="left:484px;top:374px;width:8px;height:8px;background:rgb(233,233,233);"></div><div style="left:492px;top:374px;width:8px;height:8px;background:rgb(226,226,226);"></div><div style="left:500px;top:374px;width:8px;height:8px;background:rgb(230,230,230);"></div><div style="left:508px;top:374px;width:8px;height:8px;background:rgb(234,234,234);"></div><div style="left:516px;top:374px;width:8px;height:8px;background:rgb(225,225,225);"></div><div style="left:524px;top:374px;width:8px;height:8px;background:rgb(226,226,226);"></div><div style="left:532px;top:374px;width:8px;height:8px;background:rgb(238,238,238);"></div><div style="left:540px;top:374px;width:8px;height:8px;background:rgb(228,228,228);"></div><div style="left:548px;top:374px;width:8px;height:8px;background:rgb(234,234,234);"></div><div style="left:556px;top:374px;width:8px;height:8px;background:rgb(231,231,231);"></div><div style="left:564px;top:374px;width:8px;height:8px;background:rgb(227,227,227);"></div><div style="left:572px;top:374px;width:8px;height:8px;background:rgb(235,235,235);"></div><div style="left:580px;top:374px;width:8px;height:8px;background:rgb(229,229,229);"></div><div style="left:588px;top:374px;width:8px;height:8px;background:rgb(230,230,230);"></div><div style="left:484px;top:382px;width:8px;height:8px;background:rgb(234,234,234);"></div><div style="left:492px;top:382px;width:8px;height:8px;background:rgb(230,230,230);"></div><div style="left:500px;top:382px;width:8px;height:8px;background:rgb(232,232,232);"></div><div style="left:508px;top:382px;width:8px;height:8px;background:rgb(226,226,226);"></div><div style="left:516px;top:382px;width:8px;height:8px;background:rgb(226,226,226);"></div><div style="left:524px;top:382px;width:8px;height:8px;background:rgb(238,238,238);"></div><div style="left:532px;top:382px;width:8px;height:8px;background:rgb(232,232,232);"></div><div style="left:540px;top:382px;width:8px;height:8px;background:rgb(232,232,232);"></div><div style="left:548px;top:382px;width:8px;height:8px;background:rgb(232,232,232);"></div><div style="left:556px;top:382px;width:8px;height:8px;background:rgb(232,232,232);"></div><div style="left:564px;top:382px;width:8px;height:8px;background:rgb(229,229,229);"></div><div style="left:572px;top:382px;width:8px;height:8px;background:rgb(226,226,226);"></div><div style="left:580px;top:382px;width:8px;height:8px;background:rgb(227,227,227);"></div><div style="left:588px;top:382px;width:8px;height:8px;background:rgb(226,226,226);"></div><div style="left:315px;top:391px;width:8px;height:8px;background:rgb(185,185,185);"></div><div style="left:323px;top:391px;width:8px;height:8px;background:rgb(133,133,133);"></div><div style="left:331px;top:391px;width:8px;height:8px;background:rgb(184,184,184);"></div><div style="left:339px;top:391px;width:8px;height:8px;background:rgb(123,123,123);"></div><div style="left:347px;top:391px;width:8px;height:8px;background:rgb(151,151,151);"></div><div style="left:355px;top:391px;width:8px;height:8px;background:rgb(178,178,178);"></div><div style="left:363px;top:391px;width:8px;height:8px;background:rgb(110,110,110);"></div><div style="left:371px;top:391px;width:8px;height:8px;background:rgb(156,156,156);"></div><div style="left:379px;top:391px;width:8px;height:8px;background:rgb(92,92,92);"></div><div style="left:387px;top:391px;width:8px;height:8px;background:rgb(116,116,116);"></div><div style="left:395px;top:391px;width:8px;height:8px;background:rgb(157,157,157);"></div><div style="left:403px;top:391px;width:8px;height:8px;background:rgb(136,136,136);"></div><div style="left:411px;top:391px;width:8px;height:8px;background:rgb(108,108,108);"></div><div style="left:419px;top:391px;width:8px;height:8px;background:rgb(178,178,178);"></div><div style="left:427px;top:391px;width:8px;height:8px;background:rgb(159,159,159);"></div><div style="left:435px;top:391px;width:8px;height:8px;background:rgb(93,93,93);"></div><div style="left:315px;top:399px;width:8px;height:8px;background:rgb(187,187,187);"></div><div style="left:323px;top:399px;width:8px;height:8px;background:rgb(157,157,157);"></div><div style="left:331px;top:399px;width:8px;height:8px;background:rgb(128,128,128);"></div><div style="left:339px;top:399px;width:8px;height:8px;background:rgb(172,172,172);"></div><div style="left:347px;top:399px;width:8px;height:8px;background:rgb(101,101,101);"></div><div style="left:355px;top:399px;width:8px;height:8px;background:rgb(179,179,179);"></div><div style="left:363px;top:399px;width:8px;height:8px;background:rgb(123,123,123);"></div><div style="left:371px;top:399px;width:8px;height:8px;background:rgb(156,156,156);"></div><div style="left:379px;top:399px;width:8px;height:8px;background:rgb(136,136,136);"></div><div style="left:387px;top:399px;width:8px;height:8px;background:rgb(111,111,111);"></div><div style="left:395px;top:399px;width:8px;height:8px;background:rgb(135,135,135);"></div><div style="left:403px;top:399px;width:8px;height:8px;background:rgb(188,188,188);"></div><div style="left:411px;top:399px;width:8px;height:8px;background:rgb(118,118,118);"></div><div style="left:419px;top:399px;width:8px;height:8px;background:rgb(158,158,158);"></div><div style="left:427px;top:399px;width:8px;height:8px;background:rgb(159,159,159);"></div><div style="left:435px;top:399px;width:8px;height:8px;background:rgb(189,189,189);"></div><div style="left:315px;top:407px;width:8px;height:8px;background:rgb(154,154,154);"></div><div style="left:323px;top:407px;width:8px;height:8px;background:rgb(132,132,132);"></div><div style="left:331px;top:407px;width:8px;height:8px;background:rgb(171,171,171);"></div><div style="left:339px;top:407px;width:8px;height:8px;background:rgb(118,118,118);"></div><div style="left:347px;top:407px;width:8px;height:8px;background:rgb(168,168,168);"></div><div style="left:355px;top:407px;width:8px;height:8px;background:rgb(190,190,190);"></div><div style="left:363px;top:407px;width:8px;height:8px;background:rgb(187,187,187);"></div><div style="left:371px;top:407px;width:8px;height:8px;background:rgb(114,114,114);"></div><div style="left:379px;top:407px;width:8px;height:8px;background:rgb(120,120,120);"></div><div style="left:387px;top:407px;width:8px;height:8px;background:rgb(141,141,141);"></div><div style="left:395px;top:407px;width:8px;height:8px;background:rgb(184,184,184);"></div><div style="left:403px;top:407px;width:8px;height:8px;background:rgb(119,119,119);"></div><div style="left:411px;top:407px;width:8px;height:8px;background:rgb(115,115,115);"></div><div style="left:419px;top:407px;width:8px;height:8px;background:rgb(156,156,156);"></div><div style="left:427px;top:407px;width:8px;height:8px;background:rgb(153,153,153);"></div><div style="left:435px;top:407px;width:8px;height:8px;background:rgb(135,135,135);"></div></div>
<div style="left:308px;top:322px;width:2px;height:3px;background:#666;"></div>
<div style="left:308px;top:336px;width:3px;height:3px;background:#666;"></div>
<div style="left:308px;top:352px;width:3px;height:3px;background:#777;"></div>
<div style="left:308px;top:370px;width:3px;height:3px;background:#777;"></div>
<div style="left:309px;top:392px;width:2px;height:22px;background:#333;"></div>
<div style="left:33px;top:426px;width:3224px;height:14px;background:#c9c9c9;"></div>
<div style="left:33px;top:440px;width:3224px;height:1px;background:#636363;"></div>
<div style="left:1908px;top:432px;width:4px;height:4px;background:#666;box-shadow:1px 1px 0 #fff;"></div>
<div style="left:1916px;top:432px;width:4px;height:4px;background:#666;box-shadow:1px 1px 0 #fff;"></div>
<div style="left:1924px;top:432px;width:4px;height:4px;background:#666;box-shadow:1px 1px 0 #fff;"></div>
<div style="left:1932px;top:432px;width:4px;height:4px;background:#666;box-shadow:1px 1px 0 #fff;"></div>
<div style="left:1940px;top:432px;width:4px;height:4px;background:#666;box-shadow:1px 1px 0 #fff;"></div>
<div style="left:33px;top:441px;width:3224px;height:4px;background:#f6f6f6;"></div>
<div style="left:36px;top:445px;width:2745px;height:41px;background:#e4e4e4;"></div>
<div style="left:36px;top:486px;width:3221px;height:2px;background:#dcdcdc;"></div>
<div style="left:202px;top:447px"><svg width="10" height="6" viewBox="0 0 10 6" shape-rendering="crispEdges"><path d="M4 0 H6 V2 H8 V4 H10 V6 H0 V4 H2 V2 H4 Z" fill="#c4002b"/></svg></div>
<div style="left:394px;top:447px"><svg width="10" height="6" viewBox="0 0 10 6" shape-rendering="crispEdges"><path d="M4 0 H6 V2 H8 V4 H10 V6 H0 V4 H2 V2 H4 Z" fill="#c4002b"/></svg></div>
<div style="left:964px;top:447px"><svg width="10" height="6" viewBox="0 0 10 6" shape-rendering="crispEdges"><path d="M4 0 H6 V2 H8 V4 H10 V6 H0 V4 H2 V2 H4 Z" fill="#c4002b"/></svg></div>
<div style="left:1167px;top:447px"><svg width="10" height="6" viewBox="0 0 10 6" shape-rendering="crispEdges"><path d="M4 0 H6 V2 H8 V4 H10 V6 H0 V4 H2 V2 H4 Z" fill="#c4002b"/></svg></div>
<div style="left:1824px;top:447px"><svg width="10" height="6" viewBox="0 0 10 6" shape-rendering="crispEdges"><path d="M4 0 H6 V2 H8 V4 H10 V6 H0 V4 H2 V2 H4 Z" fill="#c4002b"/></svg></div>
<div style="left:2142px;top:447px"><svg width="10" height="6" viewBox="0 0 10 6" shape-rendering="crispEdges"><path d="M4 0 H6 V2 H8 V4 H10 V6 H0 V4 H2 V2 H4 Z" fill="#c4002b"/></svg></div>
<div style="left:2350px;top:447px"><svg width="10" height="6" viewBox="0 0 10 6" shape-rendering="crispEdges"><path d="M4 0 H6 V2 H8 V4 H10 V6 H0 V4 H2 V2 H4 Z" fill="#c4002b"/></svg></div>
<div style="left:2479px;top:447px"><svg width="10" height="6" viewBox="0 0 10 6" shape-rendering="crispEdges"><path d="M4 0 H6 V2 H8 V4 H10 V6 H0 V4 H2 V2 H4 Z" fill="#c4002b"/></svg></div>
<div style="left:218px;top:445px;width:1px;height:41px;background:#d2d2d2;"></div>
<div style="left:219px;top:445px;width:1px;height:41px;background:#ececec;"></div>
<div style="left:410px;top:445px;width:1px;height:41px;background:#d2d2d2;"></div>
<div style="left:411px;top:445px;width:1px;height:41px;background:#ececec;"></div>
<div style="left:980px;top:445px;width:1px;height:41px;background:#d2d2d2;"></div>
<div style="left:981px;top:445px;width:1px;height:41px;background:#ececec;"></div>
<div style="left:1183px;top:445px;width:1px;height:41px;background:#d2d2d2;"></div>
<div style="left:1184px;top:445px;width:1px;height:41px;background:#ececec;"></div>
<div style="left:1360px;top:445px;width:1px;height:41px;background:#d2d2d2;"></div>
<div style="left:1361px;top:445px;width:1px;height:41px;background:#ececec;"></div>
<div style="left:1599px;top:445px;width:1px;height:41px;background:#d2d2d2;"></div>
<div style="left:1600px;top:445px;width:1px;height:41px;background:#ececec;"></div>
<div style="left:1840px;top:445px;width:1px;height:41px;background:#d2d2d2;"></div>
<div style="left:1841px;top:445px;width:1px;height:41px;background:#ececec;"></div>
<div style="left:2008px;top:445px;width:1px;height:41px;background:#d2d2d2;"></div>
<div style="left:2009px;top:445px;width:1px;height:41px;background:#ececec;"></div>
<div style="left:2158px;top:445px;width:1px;height:41px;background:#d2d2d2;"></div>
<div style="left:2159px;top:445px;width:1px;height:41px;background:#ececec;"></div>
<div style="left:2366px;top:445px;width:1px;height:41px;background:#d2d2d2;"></div>
<div style="left:2367px;top:445px;width:1px;height:41px;background:#ececec;"></div>
<div style="left:2495px;top:445px;width:1px;height:41px;background:#d2d2d2;"></div>
<div style="left:2496px;top:445px;width:1px;height:41px;background:#ececec;"></div>
<div style="left:2738px;top:445px;width:1px;height:41px;background:#d2d2d2;"></div>
<div style="left:2739px;top:445px;width:1px;height:41px;background:#ececec;"></div>
<div style="left:36px;top:488px;width:2745px;height:1109px;background:#e9edf0;"></div>
<div style="left:36px;top:488px;width:182px;height:1108px;background:#a6e4f4;"></div>
<div style="left:37px;top:488px;width:181px;height:35px;background:#c8e0ed;"></div>
<div style="left:2009px;top:488px;width:357px;height:110px;background:#a6e4f4;"></div>
<div style="left:2009px;top:598px;width:357px;height:111px;background:#cbe3e4;"></div>
<div style="left:2009px;top:709px;width:357px;height:37px;background:#a6e4f4;"></div>
<div style="left:2009px;top:746px;width:357px;height:185px;background:#cbe3e4;"></div>
<div style="left:2009px;top:931px;width:357px;height:111px;background:#a6e4f4;"></div>
<div style="left:2009px;top:1042px;width:357px;height:296px;background:#cbe3e4;"></div>
<div style="left:2009px;top:1338px;width:357px;height:37px;background:#a6e4f4;"></div>
<div style="left:2009px;top:1375px;width:357px;height:37px;background:#cbe3e4;"></div>
<div style="left:2009px;top:1412px;width:357px;height:74px;background:#a6e4f4;"></div>
<div style="left:2009px;top:1486px;width:357px;height:37px;background:#cbe3e4;"></div>
<div style="left:2009px;top:1523px;width:357px;height:37px;background:#a6e4f4;"></div>
<div style="left:2009px;top:1560px;width:357px;height:37px;background:#cbe3e4;"></div>
<div style="left:1184px;top:523px;width:415px;height:1px;background:#dcdcdc;"></div>
<div style="left:1841px;top:523px;width:167px;height:1px;background:#dcdcdc;"></div>
<div style="left:2009px;top:523px;width:357px;height:1px;background:#c3e3ea;"></div>
<div style="left:2496px;top:523px;width:285px;height:1px;background:#dcdcdc;"></div>
<div style="left:1184px;top:560px;width:415px;height:1px;background:#dcdcdc;"></div>
<div style="left:1841px;top:560px;width:167px;height:1px;background:#dcdcdc;"></div>
<div style="left:2009px;top:560px;width:357px;height:1px;background:#c3e3ea;"></div>
<div style="left:2496px;top:560px;width:285px;height:1px;background:#dcdcdc;"></div>
<div style="left:1184px;top:597px;width:415px;height:1px;background:#dcdcdc;"></div>
<div style="left:1600px;top:597px;width:240px;height:1px;background:#dcdcdc;"></div>
<div style="left:1841px;top:597px;width:167px;height:1px;background:#dcdcdc;"></div>
<div style="left:2009px;top:597px;width:357px;height:1px;background:#d3e4e6;"></div>
<div style="left:2496px;top:597px;width:285px;height:1px;background:#dcdcdc;"></div>
<div style="left:1184px;top:634px;width:415px;height:1px;background:#dcdcdc;"></div>
<div style="left:1841px;top:634px;width:167px;height:1px;background:#dcdcdc;"></div>
<div style="left:2009px;top:634px;width:357px;height:1px;background:#d3e4e6;"></div>
<div style="left:2496px;top:634px;width:285px;height:1px;background:#dcdcdc;"></div>
<div style="left:219px;top:671px;width:761px;height:1px;background:#dcdcdc;"></div>
<div style="left:1184px;top:671px;width:415px;height:1px;background:#dcdcdc;"></div>
<div style="left:1841px;top:671px;width:167px;height:1px;background:#dcdcdc;"></div>
<div style="left:2009px;top:671px;width:357px;height:1px;background:#d3e4e6;"></div>
<div style="left:2496px;top:671px;width:285px;height:1px;background:#dcdcdc;"></div>
<div style="left:219px;top:708px;width:761px;height:1px;background:#dcdcdc;"></div>
<div style="left:1184px;top:708px;width:415px;height:1px;background:#dcdcdc;"></div>
<div style="left:1600px;top:708px;width:240px;height:1px;background:#dcdcdc;"></div>
<div style="left:1841px;top:708px;width:167px;height:1px;background:#dcdcdc;"></div>
<div style="left:2009px;top:708px;width:357px;height:1px;background:#d3e4e6;"></div>
<div style="left:2496px;top:708px;width:285px;height:1px;background:#dcdcdc;"></div>
<div style="left:1184px;top:745px;width:415px;height:1px;background:#dcdcdc;"></div>
<div style="left:1600px;top:745px;width:240px;height:1px;background:#dcdcdc;"></div>
<div style="left:1841px;top:745px;width:167px;height:1px;background:#dcdcdc;"></div>
<div style="left:2009px;top:745px;width:357px;height:1px;background:#d3e4e6;"></div>
<div style="left:2496px;top:745px;width:285px;height:1px;background:#dcdcdc;"></div>
<div style="left:1184px;top:782px;width:415px;height:1px;background:#dcdcdc;"></div>
<div style="left:1841px;top:782px;width:167px;height:1px;background:#dcdcdc;"></div>
<div style="left:2496px;top:782px;width:285px;height:1px;background:#dcdcdc;"></div>
<div style="left:1184px;top:819px;width:415px;height:1px;background:#dcdcdc;"></div>
<div style="left:1841px;top:819px;width:167px;height:1px;background:#dcdcdc;"></div>
<div style="left:2496px;top:819px;width:285px;height:1px;background:#dcdcdc;"></div>
<div style="left:1184px;top:856px;width:415px;height:1px;background:#dcdcdc;"></div>
<div style="left:1841px;top:856px;width:167px;height:1px;background:#dcdcdc;"></div>
<div style="left:2496px;top:856px;width:285px;height:1px;background:#dcdcdc;"></div>
<div style="left:1184px;top:893px;width:415px;height:1px;background:#dcdcdc;"></div>
<div style="left:1841px;top:893px;width:167px;height:1px;background:#dcdcdc;"></div>
<div style="left:2496px;top:893px;width:285px;height:1px;background:#dcdcdc;"></div>
<div style="left:219px;top:930px;width:761px;height:1px;background:#dcdcdc;"></div>
<div style="left:1184px;top:930px;width:415px;height:1px;background:#dcdcdc;"></div>
<div style="left:1600px;top:930px;width:240px;height:1px;background:#dcdcdc;"></div>
<div style="left:1841px;top:930px;width:167px;height:1px;background:#dcdcdc;"></div>
<div style="left:2009px;top:930px;width:357px;height:1px;background:#d3e4e6;"></div>
<div style="left:2496px;top:930px;width:285px;height:1px;background:#dcdcdc;"></div>
<div style="left:219px;top:967px;width:761px;height:1px;background:#dcdcdc;"></div>
<div style="left:1184px;top:967px;width:415px;height:1px;background:#dcdcdc;"></div>
<div style="left:1841px;top:967px;width:167px;height:1px;background:#dcdcdc;"></div>
<div style="left:2496px;top:967px;width:285px;height:1px;background:#dcdcdc;"></div>
<div style="left:1184px;top:1004px;width:415px;height:1px;background:#dcdcdc;"></div>
<div style="left:1841px;top:1004px;width:167px;height:1px;background:#dcdcdc;"></div>
<div style="left:2009px;top:1004px;width:357px;height:1px;background:#c3e3ea;"></div>
<div style="left:2496px;top:1004px;width:285px;height:1px;background:#dcdcdc;"></div>
<div style="left:219px;top:1041px;width:761px;height:1px;background:#dcdcdc;"></div>
<div style="left:1184px;top:1041px;width:415px;height:1px;background:#dcdcdc;"></div>
<div style="left:1600px;top:1041px;width:240px;height:1px;background:#dcdcdc;"></div>
<div style="left:1841px;top:1041px;width:167px;height:1px;background:#dcdcdc;"></div>
<div style="left:2009px;top:1041px;width:357px;height:1px;background:#d3e4e6;"></div>
<div style="left:2496px;top:1041px;width:285px;height:1px;background:#dcdcdc;"></div>
<div style="left:1184px;top:1078px;width:415px;height:1px;background:#dcdcdc;"></div>
<div style="left:1841px;top:1078px;width:167px;height:1px;background:#dcdcdc;"></div>
<div style="left:2496px;top:1078px;width:285px;height:1px;background:#dcdcdc;"></div>
<div style="left:1184px;top:1115px;width:415px;height:1px;background:#dcdcdc;"></div>
<div style="left:1841px;top:1115px;width:167px;height:1px;background:#dcdcdc;"></div>
<div style="left:2496px;top:1115px;width:285px;height:1px;background:#dcdcdc;"></div>
<div style="left:1184px;top:1152px;width:415px;height:1px;background:#dcdcdc;"></div>
<div style="left:1841px;top:1152px;width:167px;height:1px;background:#dcdcdc;"></div>
<div style="left:2496px;top:1152px;width:285px;height:1px;background:#dcdcdc;"></div>
<div style="left:1184px;top:1189px;width:415px;height:1px;background:#dcdcdc;"></div>
<div style="left:1841px;top:1189px;width:167px;height:1px;background:#dcdcdc;"></div>
<div style="left:2496px;top:1189px;width:285px;height:1px;background:#dcdcdc;"></div>
<div style="left:1184px;top:1226px;width:415px;height:1px;background:#dcdcdc;"></div>
<div style="left:1841px;top:1226px;width:167px;height:1px;background:#dcdcdc;"></div>
<div style="left:2496px;top:1226px;width:285px;height:1px;background:#dcdcdc;"></div>
<div style="left:1184px;top:1263px;width:415px;height:1px;background:#dcdcdc;"></div>
<div style="left:1841px;top:1263px;width:167px;height:1px;background:#dcdcdc;"></div>
<div style="left:2496px;top:1263px;width:285px;height:1px;background:#dcdcdc;"></div>
<div style="left:1184px;top:1300px;width:415px;height:1px;background:#dcdcdc;"></div>
<div style="left:1841px;top:1300px;width:167px;height:1px;background:#dcdcdc;"></div>
<div style="left:2496px;top:1300px;width:285px;height:1px;background:#dcdcdc;"></div>
<div style="left:219px;top:1337px;width:761px;height:1px;background:#dcdcdc;"></div>
<div style="left:1184px;top:1337px;width:415px;height:1px;background:#dcdcdc;"></div>
<div style="left:1600px;top:1337px;width:240px;height:1px;background:#dcdcdc;"></div>
<div style="left:1841px;top:1337px;width:167px;height:1px;background:#dcdcdc;"></div>
<div style="left:2009px;top:1337px;width:357px;height:1px;background:#d3e4e6;"></div>
<div style="left:2496px;top:1337px;width:285px;height:1px;background:#dcdcdc;"></div>
<div style="left:1184px;top:1374px;width:415px;height:1px;background:#dcdcdc;"></div>
<div style="left:1600px;top:1374px;width:240px;height:1px;background:#dcdcdc;"></div>
<div style="left:1841px;top:1374px;width:167px;height:1px;background:#dcdcdc;"></div>
<div style="left:2009px;top:1374px;width:357px;height:1px;background:#d3e4e6;"></div>
<div style="left:2496px;top:1374px;width:285px;height:1px;background:#dcdcdc;"></div>
<div style="left:219px;top:1411px;width:761px;height:1px;background:#dcdcdc;"></div>
<div style="left:1184px;top:1411px;width:415px;height:1px;background:#dcdcdc;"></div>
<div style="left:1600px;top:1411px;width:240px;height:1px;background:#dcdcdc;"></div>
<div style="left:1841px;top:1411px;width:167px;height:1px;background:#dcdcdc;"></div>
<div style="left:2009px;top:1411px;width:357px;height:1px;background:#d3e4e6;"></div>
<div style="left:2496px;top:1411px;width:285px;height:1px;background:#dcdcdc;"></div>
<div style="left:1184px;top:1448px;width:415px;height:1px;background:#dcdcdc;"></div>
<div style="left:1841px;top:1448px;width:167px;height:1px;background:#dcdcdc;"></div>
<div style="left:2009px;top:1448px;width:357px;height:1px;background:#c3e3ea;"></div>
<div style="left:2496px;top:1448px;width:285px;height:1px;background:#dcdcdc;"></div>
<div style="left:1184px;top:1485px;width:415px;height:1px;background:#dcdcdc;"></div>
<div style="left:1600px;top:1485px;width:240px;height:1px;background:#dcdcdc;"></div>
<div style="left:1841px;top:1485px;width:167px;height:1px;background:#dcdcdc;"></div>
<div style="left:2009px;top:1485px;width:357px;height:1px;background:#d3e4e6;"></div>
<div style="left:2496px;top:1485px;width:285px;height:1px;background:#dcdcdc;"></div>
<div style="left:219px;top:1522px;width:761px;height:1px;background:#dcdcdc;"></div>
<div style="left:1184px;top:1522px;width:415px;height:1px;background:#dcdcdc;"></div>
<div style="left:1600px;top:1522px;width:240px;height:1px;background:#dcdcdc;"></div>
<div style="left:1841px;top:1522px;width:167px;height:1px;background:#dcdcdc;"></div>
<div style="left:2009px;top:1522px;width:357px;height:1px;background:#d3e4e6;"></div>
<div style="left:2496px;top:1522px;width:285px;height:1px;background:#dcdcdc;"></div>
<div style="left:1184px;top:1559px;width:415px;height:1px;background:#dcdcdc;"></div>
<div style="left:1600px;top:1559px;width:240px;height:1px;background:#dcdcdc;"></div>
<div style="left:1841px;top:1559px;width:167px;height:1px;background:#dcdcdc;"></div>
<div style="left:2009px;top:1559px;width:357px;height:1px;background:#d3e4e6;"></div>
<div style="left:2496px;top:1559px;width:285px;height:1px;background:#dcdcdc;"></div>
<div style="left:36px;top:1596px;width:2745px;height:1px;background:#dcdcdc;"></div>
<div style="left:218px;top:488px;width:1px;height:1109px;background:#dcdcdc;"></div>
<div style="left:410px;top:488px;width:1px;height:1109px;background:#dcdcdc;"></div>
<div style="left:980px;top:488px;width:1px;height:1109px;background:#dcdcdc;"></div>
<div style="left:1183px;top:488px;width:1px;height:1109px;background:#dcdcdc;"></div>
<div style="left:1360px;top:488px;width:1px;height:1109px;background:#dcdcdc;"></div>
<div style="left:1599px;top:488px;width:1px;height:1109px;background:#dcdcdc;"></div>
<div style="left:1840px;top:488px;width:1px;height:1109px;background:#dcdcdc;"></div>
<div style="left:2008px;top:488px;width:1px;height:1109px;background:#dcdcdc;"></div>
<div style="left:2158px;top:488px;width:1px;height:1109px;background:#c9e4ea;"></div>
<div style="left:2366px;top:488px;width:1px;height:1109px;background:#dcdcdc;"></div>
<div style="left:2495px;top:488px;width:1px;height:1109px;background:#dcdcdc;"></div>
<div style="left:2738px;top:488px;width:1px;height:1109px;background:#dcdcdc;"></div>
<div style="left:2781px;top:488px;width:1px;height:1109px;background:#dcdcdc;"></div>
<div style="left:1254px;top:487px"><svg width="36" height="36" viewBox="0 0 36 36"><path d="M4.2 29.6 L20.6 14.6" stroke="#0a5c92" stroke-width="7"/><path d="M4.8 29 L19.6 15.6" stroke="#86acdc" stroke-width="3.4"/><path d="M23 5.4 L28.6 11 L23 16.6 L17.4 11 Z" fill="#cc0000"/><circle cx="23" cy="11" r="4.4" fill="#cc0000"/><circle cx="22.6" cy="11.2" r="1.3" fill="#e78f8f"/><g fill="#f08a00"><rect x="14" y="4" width="6" height="2"/><rect x="22" y="2" width="2" height="2"/><rect x="28" y="2" width="2" height="2"/><rect x="26" y="4" width="2" height="2"/><rect x="30" y="8" width="4" height="2"/><rect x="28" y="14" width="2" height="4"/></g><g fill="#ffe39a"><rect x="14" y="6" width="4" height="1.6"/><rect x="20" y="2" width="2" height="2"/><rect x="30" y="2" width="1.6" height="2"/><rect x="28" y="4" width="1.6" height="2"/><rect x="30" y="10" width="4" height="2"/><rect x="26.4" y="14" width="1.6" height="4"/></g></svg></div>
<div style="left:1912px;top:493px"><svg width="26" height="26" viewBox="0 0 26 26"><rect x="2" y="2" width="22" height="22" fill="#e9edf0" stroke="#c9c9c9" stroke-width="4"/><path d="M4.4 12 L12.2 20.2 L21.4 4" fill="none" stroke="#6c6c6c" stroke-width="3.4"/></svg></div>
<div style="left:1254px;top:524px"><svg width="36" height="36" viewBox="0 0 36 36"><path d="M4.2 29.6 L20.6 14.6" stroke="#0a5c92" stroke-width="7"/><path d="M4.8 29 L19.6 15.6" stroke="#86acdc" stroke-width="3.4"/><path d="M23 5.4 L28.6 11 L23 16.6 L17.4 11 Z" fill="#cc0000"/><circle cx="23" cy="11" r="4.4" fill="#cc0000"/><circle cx="22.6" cy="11.2" r="1.3" fill="#e78f8f"/><g fill="#f08a00"><rect x="14" y="4" width="6" height="2"/><rect x="22" y="2" width="2" height="2"/><rect x="28" y="2" width="2" height="2"/><rect x="26" y="4" width="2" height="2"/><rect x="30" y="8" width="4" height="2"/><rect x="28" y="14" width="2" height="4"/></g><g fill="#ffe39a"><rect x="14" y="6" width="4" height="1.6"/><rect x="20" y="2" width="2" height="2"/><rect x="30" y="2" width="1.6" height="2"/><rect x="28" y="4" width="1.6" height="2"/><rect x="30" y="10" width="4" height="2"/><rect x="26.4" y="14" width="1.6" height="4"/></g></svg></div>
<div style="left:1912px;top:530px"><svg width="26" height="26" viewBox="0 0 26 26"><rect x="2" y="2" width="22" height="22" fill="#e9edf0" stroke="#c9c9c9" stroke-width="4"/><path d="M4.4 12 L12.2 20.2 L21.4 4" fill="none" stroke="#6c6c6c" stroke-width="3.4"/></svg></div>
<div style="left:1254px;top:561px"><svg width="36" height="36" viewBox="0 0 36 36"><path d="M4.2 29.6 L20.6 14.6" stroke="#0a5c92" stroke-width="7"/><path d="M4.8 29 L19.6 15.6" stroke="#86acdc" stroke-width="3.4"/><path d="M23 5.4 L28.6 11 L23 16.6 L17.4 11 Z" fill="#cc0000"/><circle cx="23" cy="11" r="4.4" fill="#cc0000"/><circle cx="22.6" cy="11.2" r="1.3" fill="#e78f8f"/><g fill="#f08a00"><rect x="14" y="4" width="6" height="2"/><rect x="22" y="2" width="2" height="2"/><rect x="28" y="2" width="2" height="2"/><rect x="26" y="4" width="2" height="2"/><rect x="30" y="8" width="4" height="2"/><rect x="28" y="14" width="2" height="4"/></g><g fill="#ffe39a"><rect x="14" y="6" width="4" height="1.6"/><rect x="20" y="2" width="2" height="2"/><rect x="30" y="2" width="1.6" height="2"/><rect x="28" y="4" width="1.6" height="2"/><rect x="30" y="10" width="4" height="2"/><rect x="26.4" y="14" width="1.6" height="4"/></g></svg></div>
<div style="left:1912px;top:567px"><svg width="26" height="26" viewBox="0 0 26 26"><rect x="2" y="2" width="22" height="22" fill="#e9edf0" stroke="#c9c9c9" stroke-width="4"/><path d="M4.4 12 L12.2 20.2 L21.4 4" fill="none" stroke="#6c6c6c" stroke-width="3.4"/></svg></div>
<div style="left:1254px;top:598px"><svg width="36" height="36" viewBox="0 0 36 36"><path d="M4.2 29.6 L20.6 14.6" stroke="#0a5c92" stroke-width="7"/><path d="M4.8 29 L19.6 15.6" stroke="#86acdc" stroke-width="3.4"/><path d="M23 5.4 L28.6 11 L23 16.6 L17.4 11 Z" fill="#cc0000"/><circle cx="23" cy="11" r="4.4" fill="#cc0000"/><circle cx="22.6" cy="11.2" r="1.3" fill="#e78f8f"/><g fill="#f08a00"><rect x="14" y="4" width="6" height="2"/><rect x="22" y="2" width="2" height="2"/><rect x="28" y="2" width="2" height="2"/><rect x="26" y="4" width="2" height="2"/><rect x="30" y="8" width="4" height="2"/><rect x="28" y="14" width="2" height="4"/></g><g fill="#ffe39a"><rect x="14" y="6" width="4" height="1.6"/><rect x="20" y="2" width="2" height="2"/><rect x="30" y="2" width="1.6" height="2"/><rect x="28" y="4" width="1.6" height="2"/><rect x="30" y="10" width="4" height="2"/><rect x="26.4" y="14" width="1.6" height="4"/></g></svg></div>
<div style="left:1912px;top:604px"><svg width="26" height="26" viewBox="0 0 26 26"><rect x="2" y="2" width="22" height="22" fill="#e9edf0" stroke="#c9c9c9" stroke-width="4"/></svg></div>
<div style="left:1254px;top:635px"><svg width="36" height="36" viewBox="0 0 36 36"><path d="M4.2 29.6 L20.6 14.6" stroke="#0a5c92" stroke-width="7"/><path d="M4.8 29 L19.6 15.6" stroke="#86acdc" stroke-width="3.4"/><path d="M23 5.4 L28.6 11 L23 16.6 L17.4 11 Z" fill="#cc0000"/><circle cx="23" cy="11" r="4.4" fill="#cc0000"/><circle cx="22.6" cy="11.2" r="1.3" fill="#e78f8f"/><g fill="#f08a00"><rect x="14" y="4" width="6" height="2"/><rect x="22" y="2" width="2" height="2"/><rect x="28" y="2" width="2" height="2"/><rect x="26" y="4" width="2" height="2"/><rect x="30" y="8" width="4" height="2"/><rect x="28" y="14" width="2" height="4"/></g><g fill="#ffe39a"><rect x="14" y="6" width="4" height="1.6"/><rect x="20" y="2" width="2" height="2"/><rect x="30" y="2" width="1.6" height="2"/><rect x="28" y="4" width="1.6" height="2"/><rect x="30" y="10" width="4" height="2"/><rect x="26.4" y="14" width="1.6" height="4"/></g></svg></div>
<div style="left:1912px;top:641px"><svg width="26" height="26" viewBox="0 0 26 26"><rect x="2" y="2" width="22" height="22" fill="#e9edf0" stroke="#c9c9c9" stroke-width="4"/></svg></div>
<div style="left:1254px;top:672px"><svg width="36" height="36" viewBox="0 0 36 36"><path d="M4.2 29.6 L20.6 14.6" stroke="#0a5c92" stroke-width="7"/><path d="M4.8 29 L19.6 15.6" stroke="#86acdc" stroke-width="3.4"/><path d="M23 5.4 L28.6 11 L23 16.6 L17.4 11 Z" fill="#cc0000"/><circle cx="23" cy="11" r="4.4" fill="#cc0000"/><circle cx="22.6" cy="11.2" r="1.3" fill="#e78f8f"/><g fill="#f08a00"><rect x="14" y="4" width="6" height="2"/><rect x="22" y="2" width="2" height="2"/><rect x="28" y="2" width="2" height="2"/><rect x="26" y="4" width="2" height="2"/><rect x="30" y="8" width="4" height="2"/><rect x="28" y="14" width="2" height="4"/></g><g fill="#ffe39a"><rect x="14" y="6" width="4" height="1.6"/><rect x="20" y="2" width="2" height="2"/><rect x="30" y="2" width="1.6" height="2"/><rect x="28" y="4" width="1.6" height="2"/><rect x="30" y="10" width="4" height="2"/><rect x="26.4" y="14" width="1.6" height="4"/></g></svg></div>
<div style="left:1912px;top:678px"><svg width="26" height="26" viewBox="0 0 26 26"><rect x="2" y="2" width="22" height="22" fill="#e9edf0" stroke="#c9c9c9" stroke-width="4"/></svg></div>
<div style="left:1254px;top:709px"><svg width="36" height="36" viewBox="0 0 36 36"><path d="M4.2 29.6 L20.6 14.6" stroke="#0a5c92" stroke-width="7"/><path d="M4.8 29 L19.6 15.6" stroke="#86acdc" stroke-width="3.4"/><path d="M23 5.4 L28.6 11 L23 16.6 L17.4 11 Z" fill="#cc0000"/><circle cx="23" cy="11" r="4.4" fill="#cc0000"/><circle cx="22.6" cy="11.2" r="1.3" fill="#e78f8f"/><g fill="#f08a00"><rect x="14" y="4" width="6" height="2"/><rect x="22" y="2" width="2" height="2"/><rect x="28" y="2" width="2" height="2"/><rect x="26" y="4" width="2" height="2"/><rect x="30" y="8" width="4" height="2"/><rect x="28" y="14" width="2" height="4"/></g><g fill="#ffe39a"><rect x="14" y="6" width="4" height="1.6"/><rect x="20" y="2" width="2" height="2"/><rect x="30" y="2" width="1.6" height="2"/><rect x="28" y="4" width="1.6" height="2"/><rect x="30" y="10" width="4" height="2"/><rect x="26.4" y="14" width="1.6" height="4"/></g></svg></div>
<div style="left:1912px;top:715px"><svg width="26" height="26" viewBox="0 0 26 26"><rect x="2" y="2" width="22" height="22" fill="#e9edf0" stroke="#c9c9c9" stroke-width="4"/><path d="M4.4 12 L12.2 20.2 L21.4 4" fill="none" stroke="#6c6c6c" stroke-width="3.4"/></svg></div>
<div style="left:1254px;top:746px"><svg width="36" height="36" viewBox="0 0 36 36"><path d="M4.2 29.6 L20.6 14.6" stroke="#0a5c92" stroke-width="7"/><path d="M4.8 29 L19.6 15.6" stroke="#86acdc" stroke-width="3.4"/><path d="M23 5.4 L28.6 11 L23 16.6 L17.4 11 Z" fill="#cc0000"/><circle cx="23" cy="11" r="4.4" fill="#cc0000"/><circle cx="22.6" cy="11.2" r="1.3" fill="#e78f8f"/><g fill="#f08a00"><rect x="14" y="4" width="6" height="2"/><rect x="22" y="2" width="2" height="2"/><rect x="28" y="2" width="2" height="2"/><rect x="26" y="4" width="2" height="2"/><rect x="30" y="8" width="4" height="2"/><rect x="28" y="14" width="2" height="4"/></g><g fill="#ffe39a"><rect x="14" y="6" width="4" height="1.6"/><rect x="20" y="2" width="2" height="2"/><rect x="30" y="2" width="1.6" height="2"/><rect x="28" y="4" width="1.6" height="2"/><rect x="30" y="10" width="4" height="2"/><rect x="26.4" y="14" width="1.6" height="4"/></g></svg></div>
<div style="left:1912px;top:752px"><svg width="26" height="26" viewBox="0 0 26 26"><rect x="2" y="2" width="22" height="22" fill="#e9edf0" stroke="#c9c9c9" stroke-width="4"/></svg></div>
<div style="left:1254px;top:783px"><svg width="36" height="36" viewBox="0 0 36 36"><path d="M4.2 29.6 L20.6 14.6" stroke="#0a5c92" stroke-width="7"/><path d="M4.8 29 L19.6 15.6" stroke="#86acdc" stroke-width="3.4"/><path d="M23 5.4 L28.6 11 L23 16.6 L17.4 11 Z" fill="#cc0000"/><circle cx="23" cy="11" r="4.4" fill="#cc0000"/><circle cx="22.6" cy="11.2" r="1.3" fill="#e78f8f"/><g fill="#f08a00"><rect x="14" y="4" width="6" height="2"/><rect x="22" y="2" width="2" height="2"/><rect x="28" y="2" width="2" height="2"/><rect x="26" y="4" width="2" height="2"/><rect x="30" y="8" width="4" height="2"/><rect x="28" y="14" width="2" height="4"/></g><g fill="#ffe39a"><rect x="14" y="6" width="4" height="1.6"/><rect x="20" y="2" width="2" height="2"/><rect x="30" y="2" width="1.6" height="2"/><rect x="28" y="4" width="1.6" height="2"/><rect x="30" y="10" width="4" height="2"/><rect x="26.4" y="14" width="1.6" height="4"/></g></svg></div>
<div style="left:1912px;top:789px"><svg width="26" height="26" viewBox="0 0 26 26"><rect x="2" y="2" width="22" height="22" fill="#e9edf0" stroke="#c9c9c9" stroke-width="4"/></svg></div>
<div style="left:1254px;top:820px"><svg width="36" height="36" viewBox="0 0 36 36"><path d="M4.2 29.6 L20.6 14.6" stroke="#0a5c92" stroke-width="7"/><path d="M4.8 29 L19.6 15.6" stroke="#86acdc" stroke-width="3.4"/><path d="M23 5.4 L28.6 11 L23 16.6 L17.4 11 Z" fill="#cc0000"/><circle cx="23" cy="11" r="4.4" fill="#cc0000"/><circle cx="22.6" cy="11.2" r="1.3" fill="#e78f8f"/><g fill="#f08a00"><rect x="14" y="4" width="6" height="2"/><rect x="22" y="2" width="2" height="2"/><rect x="28" y="2" width="2" height="2"/><rect x="26" y="4" width="2" height="2"/><rect x="30" y="8" width="4" height="2"/><rect x="28" y="14" width="2" height="4"/></g><g fill="#ffe39a"><rect x="14" y="6" width="4" height="1.6"/><rect x="20" y="2" width="2" height="2"/><rect x="30" y="2" width="1.6" height="2"/><rect x="28" y="4" width="1.6" height="2"/><rect x="30" y="10" width="4" height="2"/><rect x="26.4" y="14" width="1.6" height="4"/></g></svg></div>
<div style="left:1912px;top:826px"><svg width="26" height="26" viewBox="0 0 26 26"><rect x="2" y="2" width="22" height="22" fill="#e9edf0" stroke="#c9c9c9" stroke-width="4"/></svg></div>
<div style="left:1254px;top:857px"><svg width="36" height="36" viewBox="0 0 36 36"><path d="M4.2 29.6 L20.6 14.6" stroke="#0a5c92" stroke-width="7"/><path d="M4.8 29 L19.6 15.6" stroke="#86acdc" stroke-width="3.4"/><path d="M23 5.4 L28.6 11 L23 16.6 L17.4 11 Z" fill="#cc0000"/><circle cx="23" cy="11" r="4.4" fill="#cc0000"/><circle cx="22.6" cy="11.2" r="1.3" fill="#e78f8f"/><g fill="#f08a00"><rect x="14" y="4" width="6" height="2"/><rect x="22" y="2" width="2" height="2"/><rect x="28" y="2" width="2" height="2"/><rect x="26" y="4" width="2" height="2"/><rect x="30" y="8" width="4" height="2"/><rect x="28" y="14" width="2" height="4"/></g><g fill="#ffe39a"><rect x="14" y="6" width="4" height="1.6"/><rect x="20" y="2" width="2" height="2"/><rect x="30" y="2" width="1.6" height="2"/><rect x="28" y="4" width="1.6" height="2"/><rect x="30" y="10" width="4" height="2"/><rect x="26.4" y="14" width="1.6" height="4"/></g></svg></div>
<div style="left:1912px;top:863px"><svg width="26" height="26" viewBox="0 0 26 26"><rect x="2" y="2" width="22" height="22" fill="#e9edf0" stroke="#c9c9c9" stroke-width="4"/></svg></div>
<div style="left:1254px;top:894px"><svg width="36" height="36" viewBox="0 0 36 36"><path d="M4.2 29.6 L20.6 14.6" stroke="#0a5c92" stroke-width="7"/><path d="M4.8 29 L19.6 15.6" stroke="#86acdc" stroke-width="3.4"/><path d="M23 5.4 L28.6 11 L23 16.6 L17.4 11 Z" fill="#cc0000"/><circle cx="23" cy="11" r="4.4" fill="#cc0000"/><circle cx="22.6" cy="11.2" r="1.3" fill="#e78f8f"/><g fill="#f08a00"><rect x="14" y="4" width="6" height="2"/><rect x="22" y="2" width="2" height="2"/><rect x="28" y="2" width="2" height="2"/><rect x="26" y="4" width="2" height="2"/><rect x="30" y="8" width="4" height="2"/><rect x="28" y="14" width="2" height="4"/></g><g fill="#ffe39a"><rect x="14" y="6" width="4" height="1.6"/><rect x="20" y="2" width="2" height="2"/><rect x="30" y="2" width="1.6" height="2"/><rect x="28" y="4" width="1.6" height="2"/><rect x="30" y="10" width="4" height="2"/><rect x="26.4" y="14" width="1.6" height="4"/></g></svg></div>
<div style="left:1912px;top:900px"><svg width="26" height="26" viewBox="0 0 26 26"><rect x="2" y="2" width="22" height="22" fill="#e9edf0" stroke="#c9c9c9" stroke-width="4"/></svg></div>
<div style="left:1254px;top:931px"><svg width="36" height="36" viewBox="0 0 36 36"><path d="M4.2 29.6 L20.6 14.6" stroke="#0a5c92" stroke-width="7"/><path d="M4.8 29 L19.6 15.6" stroke="#86acdc" stroke-width="3.4"/><path d="M23 5.4 L28.6 11 L23 16.6 L17.4 11 Z" fill="#cc0000"/><circle cx="23" cy="11" r="4.4" fill="#cc0000"/><circle cx="22.6" cy="11.2" r="1.3" fill="#e78f8f"/><g fill="#f08a00"><rect x="14" y="4" width="6" height="2"/><rect x="22" y="2" width="2" height="2"/><rect x="28" y="2" width="2" height="2"/><rect x="26" y="4" width="2" height="2"/><rect x="30" y="8" width="4" height="2"/><rect x="28" y="14" width="2" height="4"/></g><g fill="#ffe39a"><rect x="14" y="6" width="4" height="1.6"/><rect x="20" y="2" width="2" height="2"/><rect x="30" y="2" width="1.6" height="2"/><rect x="28" y="4" width="1.6" height="2"/><rect x="30" y="10" width="4" height="2"/><rect x="26.4" y="14" width="1.6" height="4"/></g></svg></div>
<div style="left:1912px;top:937px"><svg width="26" height="26" viewBox="0 0 26 26"><rect x="2" y="2" width="22" height="22" fill="#e9edf0" stroke="#c9c9c9" stroke-width="4"/><path d="M4.4 12 L12.2 20.2 L21.4 4" fill="none" stroke="#6c6c6c" stroke-width="3.4"/></svg></div>
<div style="left:1254px;top:968px"><svg width="36" height="36" viewBox="0 0 36 36"><path d="M4.2 29.6 L20.6 14.6" stroke="#0a5c92" stroke-width="7"/><path d="M4.8 29 L19.6 15.6" stroke="#86acdc" stroke-width="3.4"/><path d="M23 5.4 L28.6 11 L23 16.6 L17.4 11 Z" fill="#cc0000"/><circle cx="23" cy="11" r="4.4" fill="#cc0000"/><circle cx="22.6" cy="11.2" r="1.3" fill="#e78f8f"/><g fill="#f08a00"><rect x="14" y="4" width="6" height="2"/><rect x="22" y="2" width="2" height="2"/><rect x="28" y="2" width="2" height="2"/><rect x="26" y="4" width="2" height="2"/><rect x="30" y="8" width="4" height="2"/><rect x="28" y="14" width="2" height="4"/></g><g fill="#ffe39a"><rect x="14" y="6" width="4" height="1.6"/><rect x="20" y="2" width="2" height="2"/><rect x="30" y="2" width="1.6" height="2"/><rect x="28" y="4" width="1.6" height="2"/><rect x="30" y="10" width="4" height="2"/><rect x="26.4" y="14" width="1.6" height="4"/></g></svg></div>
<div style="left:1912px;top:974px"><svg width="26" height="26" viewBox="0 0 26 26"><rect x="2" y="2" width="22" height="22" fill="#e9edf0" stroke="#c9c9c9" stroke-width="4"/><path d="M4.4 12 L12.2 20.2 L21.4 4" fill="none" stroke="#6c6c6c" stroke-width="3.4"/></svg></div>
<div style="left:1254px;top:1005px"><svg width="36" height="36" viewBox="0 0 36 36"><path d="M4.2 29.6 L20.6 14.6" stroke="#0a5c92" stroke-width="7"/><path d="M4.8 29 L19.6 15.6" stroke="#86acdc" stroke-width="3.4"/><path d="M23 5.4 L28.6 11 L23 16.6 L17.4 11 Z" fill="#cc0000"/><circle cx="23" cy="11" r="4.4" fill="#cc0000"/><circle cx="22.6" cy="11.2" r="1.3" fill="#e78f8f"/><g fill="#f08a00"><rect x="14" y="4" width="6" height="2"/><rect x="22" y="2" width="2" height="2"/><rect x="28" y="2" width="2" height="2"/><rect x="26" y="4" width="2" height="2"/><rect x="30" y="8" width="4" height="2"/><rect x="28" y="14" width="2" height="4"/></g><g fill="#ffe39a"><rect x="14" y="6" width="4" height="1.6"/><rect x="20" y="2" width="2" height="2"/><rect x="30" y="2" width="1.6" height="2"/><rect x="28" y="4" width="1.6" height="2"/><rect x="30" y="10" width="4" height="2"/><rect x="26.4" y="14" width="1.6" height="4"/></g></svg></div>
<div style="left:1912px;top:1011px"><svg width="26" height="26" viewBox="0 0 26 26"><rect x="2" y="2" width="22" height="22" fill="#e9edf0" stroke="#c9c9c9" stroke-width="4"/><path d="M4.4 12 L12.2 20.2 L21.4 4" fill="none" stroke="#6c6c6c" stroke-width="3.4"/></svg></div>
<div style="left:1254px;top:1042px"><svg width="36" height="36" viewBox="0 0 36 36"><path d="M4.2 29.6 L20.6 14.6" stroke="#0a5c92" stroke-width="7"/><path d="M4.8 29 L19.6 15.6" stroke="#86acdc" stroke-width="3.4"/><path d="M23 5.4 L28.6 11 L23 16.6 L17.4 11 Z" fill="#cc0000"/><circle cx="23" cy="11" r="4.4" fill="#cc0000"/><circle cx="22.6" cy="11.2" r="1.3" fill="#e78f8f"/><g fill="#f08a00"><rect x="14" y="4" width="6" height="2"/><rect x="22" y="2" width="2" height="2"/><rect x="28" y="2" width="2" height="2"/><rect x="26" y="4" width="2" height="2"/><rect x="30" y="8" width="4" height="2"/><rect x="28" y="14" width="2" height="4"/></g><g fill="#ffe39a"><rect x="14" y="6" width="4" height="1.6"/><rect x="20" y="2" width="2" height="2"/><rect x="30" y="2" width="1.6" height="2"/><rect x="28" y="4" width="1.6" height="2"/><rect x="30" y="10" width="4" height="2"/><rect x="26.4" y="14" width="1.6" height="4"/></g></svg></div>
<div style="left:1912px;top:1048px"><svg width="26" height="26" viewBox="0 0 26 26"><rect x="2" y="2" width="22" height="22" fill="#e9edf0" stroke="#c9c9c9" stroke-width="4"/></svg></div>
<div style="left:1254px;top:1079px"><svg width="36" height="36" viewBox="0 0 36 36"><path d="M4.2 29.6 L20.6 14.6" stroke="#0a5c92" stroke-width="7"/><path d="M4.8 29 L19.6 15.6" stroke="#86acdc" stroke-width="3.4"/><path d="M23 5.4 L28.6 11 L23 16.6 L17.4 11 Z" fill="#cc0000"/><circle cx="23" cy="11" r="4.4" fill="#cc0000"/><circle cx="22.6" cy="11.2" r="1.3" fill="#e78f8f"/><g fill="#f08a00"><rect x="14" y="4" width="6" height="2"/><rect x="22" y="2" width="2" height="2"/><rect x="28" y="2" width="2" height="2"/><rect x="26" y="4" width="2" height="2"/><rect x="30" y="8" width="4" height="2"/><rect x="28" y="14" width="2" height="4"/></g><g fill="#ffe39a"><rect x="14" y="6" width="4" height="1.6"/><rect x="20" y="2" width="2" height="2"/><rect x="30" y="2" width="1.6" height="2"/><rect x="28" y="4" width="1.6" height="2"/><rect x="30" y="10" width="4" height="2"/><rect x="26.4" y="14" width="1.6" height="4"/></g></svg></div>
<div style="left:1912px;top:1085px"><svg width="26" height="26" viewBox="0 0 26 26"><rect x="2" y="2" width="22" height="22" fill="#e9edf0" stroke="#c9c9c9" stroke-width="4"/></svg></div>
<div style="left:1254px;top:1116px"><svg width="36" height="36" viewBox="0 0 36 36"><path d="M4.2 29.6 L20.6 14.6" stroke="#0a5c92" stroke-width="7"/><path d="M4.8 29 L19.6 15.6" stroke="#86acdc" stroke-width="3.4"/><path d="M23 5.4 L28.6 11 L23 16.6 L17.4 11 Z" fill="#cc0000"/><circle cx="23" cy="11" r="4.4" fill="#cc0000"/><circle cx="22.6" cy="11.2" r="1.3" fill="#e78f8f"/><g fill="#f08a00"><rect x="14" y="4" width="6" height="2"/><rect x="22" y="2" width="2" height="2"/><rect x="28" y="2" width="2" height="2"/><rect x="26" y="4" width="2" height="2"/><rect x="30" y="8" width="4" height="2"/><rect x="28" y="14" width="2" height="4"/></g><g fill="#ffe39a"><rect x="14" y="6" width="4" height="1.6"/><rect x="20" y="2" width="2" height="2"/><rect x="30" y="2" width="1.6" height="2"/><rect x="28" y="4" width="1.6" height="2"/><rect x="30" y="10" width="4" height="2"/><rect x="26.4" y="14" width="1.6" height="4"/></g></svg></div>
<div style="left:1912px;top:1122px"><svg width="26" height="26" viewBox="0 0 26 26"><rect x="2" y="2" width="22" height="22" fill="#e9edf0" stroke="#c9c9c9" stroke-width="4"/></svg></div>
<div style="left:1254px;top:1153px"><svg width="36" height="36" viewBox="0 0 36 36"><path d="M4.2 29.6 L20.6 14.6" stroke="#0a5c92" stroke-width="7"/><path d="M4.8 29 L19.6 15.6" stroke="#86acdc" stroke-width="3.4"/><path d="M23 5.4 L28.6 11 L23 16.6 L17.4 11 Z" fill="#cc0000"/><circle cx="23" cy="11" r="4.4" fill="#cc0000"/><circle cx="22.6" cy="11.2" r="1.3" fill="#e78f8f"/><g fill="#f08a00"><rect x="14" y="4" width="6" height="2"/><rect x="22" y="2" width="2" height="2"/><rect x="28" y="2" width="2" height="2"/><rect x="26" y="4" width="2" height="2"/><rect x="30" y="8" width="4" height="2"/><rect x="28" y="14" width="2" height="4"/></g><g fill="#ffe39a"><rect x="14" y="6" width="4" height="1.6"/><rect x="20" y="2" width="2" height="2"/><rect x="30" y="2" width="1.6" height="2"/><rect x="28" y="4" width="1.6" height="2"/><rect x="30" y="10" width="4" height="2"/><rect x="26.4" y="14" width="1.6" height="4"/></g></svg></div>
<div style="left:1912px;top:1159px"><svg width="26" height="26" viewBox="0 0 26 26"><rect x="2" y="2" width="22" height="22" fill="#e9edf0" stroke="#c9c9c9" stroke-width="4"/></svg></div>
<div style="left:1254px;top:1190px"><svg width="36" height="36" viewBox="0 0 36 36"><path d="M4.2 29.6 L20.6 14.6" stroke="#0a5c92" stroke-width="7"/><path d="M4.8 29 L19.6 15.6" stroke="#86acdc" stroke-width="3.4"/><path d="M23 5.4 L28.6 11 L23 16.6 L17.4 11 Z" fill="#cc0000"/><circle cx="23" cy="11" r="4.4" fill="#cc0000"/><circle cx="22.6" cy="11.2" r="1.3" fill="#e78f8f"/><g fill="#f08a00"><rect x="14" y="4" width="6" height="2"/><rect x="22" y="2" width="2" height="2"/><rect x="28" y="2" width="2" height="2"/><rect x="26" y="4" width="2" height="2"/><rect x="30" y="8" width="4" height="2"/><rect x="28" y="14" width="2" height="4"/></g><g fill="#ffe39a"><rect x="14" y="6" width="4" height="1.6"/><rect x="20" y="2" width="2" height="2"/><rect x="30" y="2" width="1.6" height="2"/><rect x="28" y="4" width="1.6" height="2"/><rect x="30" y="10" width="4" height="2"/><rect x="26.4" y="14" width="1.6" height="4"/></g></svg></div>
<div style="left:1912px;top:1196px"><svg width="26" height="26" viewBox="0 0 26 26"><rect x="2" y="2" width="22" height="22" fill="#e9edf0" stroke="#c9c9c9" stroke-width="4"/></svg></div>
<div style="left:1254px;top:1227px"><svg width="36" height="36" viewBox="0 0 36 36"><path d="M4.2 29.6 L20.6 14.6" stroke="#0a5c92" stroke-width="7"/><path d="M4.8 29 L19.6 15.6" stroke="#86acdc" stroke-width="3.4"/><path d="M23 5.4 L28.6 11 L23 16.6 L17.4 11 Z" fill="#cc0000"/><circle cx="23" cy="11" r="4.4" fill="#cc0000"/><circle cx="22.6" cy="11.2" r="1.3" fill="#e78f8f"/><g fill="#f08a00"><rect x="14" y="4" width="6" height="2"/><rect x="22" y="2" width="2" height="2"/><rect x="28" y="2" width="2" height="2"/><rect x="26" y="4" width="2" height="2"/><rect x="30" y="8" width="4" height="2"/><rect x="28" y="14" width="2" height="4"/></g><g fill="#ffe39a"><rect x="14" y="6" width="4" height="1.6"/><rect x="20" y="2" width="2" height="2"/><rect x="30" y="2" width="1.6" height="2"/><rect x="28" y="4" width="1.6" height="2"/><rect x="30" y="10" width="4" height="2"/><rect x="26.4" y="14" width="1.6" height="4"/></g></svg></div>
<div style="left:1912px;top:1233px"><svg width="26" height="26" viewBox="0 0 26 26"><rect x="2" y="2" width="22" height="22" fill="#e9edf0" stroke="#c9c9c9" stroke-width="4"/></svg></div>
<div style="left:1254px;top:1264px"><svg width="36" height="36" viewBox="0 0 36 36"><path d="M4.2 29.6 L20.6 14.6" stroke="#0a5c92" stroke-width="7"/><path d="M4.8 29 L19.6 15.6" stroke="#86acdc" stroke-width="3.4"/><path d="M23 5.4 L28.6 11 L23 16.6 L17.4 11 Z" fill="#cc0000"/><circle cx="23" cy="11" r="4.4" fill="#cc0000"/><circle cx="22.6" cy="11.2" r="1.3" fill="#e78f8f"/><g fill="#f08a00"><rect x="14" y="4" width="6" height="2"/><rect x="22" y="2" width="2" height="2"/><rect x="28" y="2" width="2" height="2"/><rect x="26" y="4" width="2" height="2"/><rect x="30" y="8" width="4" height="2"/><rect x="28" y="14" width="2" height="4"/></g><g fill="#ffe39a"><rect x="14" y="6" width="4" height="1.6"/><rect x="20" y="2" width="2" height="2"/><rect x="30" y="2" width="1.6" height="2"/><rect x="28" y="4" width="1.6" height="2"/><rect x="30" y="10" width="4" height="2"/><rect x="26.4" y="14" width="1.6" height="4"/></g></svg></div>
<div style="left:1912px;top:1270px"><svg width="26" height="26" viewBox="0 0 26 26"><rect x="2" y="2" width="22" height="22" fill="#e9edf0" stroke="#c9c9c9" stroke-width="4"/></svg></div>
<div style="left:1254px;top:1301px"><svg width="36" height="36" viewBox="0 0 36 36"><path d="M4.2 29.6 L20.6 14.6" stroke="#0a5c92" stroke-width="7"/><path d="M4.8 29 L19.6 15.6" stroke="#86acdc" stroke-width="3.4"/><path d="M23 5.4 L28.6 11 L23 16.6 L17.4 11 Z" fill="#cc0000"/><circle cx="23" cy="11" r="4.4" fill="#cc0000"/><circle cx="22.6" cy="11.2" r="1.3" fill="#e78f8f"/><g fill="#f08a00"><rect x="14" y="4" width="6" height="2"/><rect x="22" y="2" width="2" height="2"/><rect x="28" y="2" width="2" height="2"/><rect x="26" y="4" width="2" height="2"/><rect x="30" y="8" width="4" height="2"/><rect x="28" y="14" width="2" height="4"/></g><g fill="#ffe39a"><rect x="14" y="6" width="4" height="1.6"/><rect x="20" y="2" width="2" height="2"/><rect x="30" y="2" width="1.6" height="2"/><rect x="28" y="4" width="1.6" height="2"/><rect x="30" y="10" width="4" height="2"/><rect x="26.4" y="14" width="1.6" height="4"/></g></svg></div>
<div style="left:1912px;top:1307px"><svg width="26" height="26" viewBox="0 0 26 26"><rect x="2" y="2" width="22" height="22" fill="#e9edf0" stroke="#c9c9c9" stroke-width="4"/></svg></div>
<div style="left:1254px;top:1338px"><svg width="36" height="36" viewBox="0 0 36 36"><path d="M4.2 29.6 L20.6 14.6" stroke="#0a5c92" stroke-width="7"/><path d="M4.8 29 L19.6 15.6" stroke="#86acdc" stroke-width="3.4"/><path d="M23 5.4 L28.6 11 L23 16.6 L17.4 11 Z" fill="#cc0000"/><circle cx="23" cy="11" r="4.4" fill="#cc0000"/><circle cx="22.6" cy="11.2" r="1.3" fill="#e78f8f"/><g fill="#f08a00"><rect x="14" y="4" width="6" height="2"/><rect x="22" y="2" width="2" height="2"/><rect x="28" y="2" width="2" height="2"/><rect x="26" y="4" width="2" height="2"/><rect x="30" y="8" width="4" height="2"/><rect x="28" y="14" width="2" height="4"/></g><g fill="#ffe39a"><rect x="14" y="6" width="4" height="1.6"/><rect x="20" y="2" width="2" height="2"/><rect x="30" y="2" width="1.6" height="2"/><rect x="28" y="4" width="1.6" height="2"/><rect x="30" y="10" width="4" height="2"/><rect x="26.4" y="14" width="1.6" height="4"/></g></svg></div>
<div style="left:1912px;top:1344px"><svg width="26" height="26" viewBox="0 0 26 26"><rect x="2" y="2" width="22" height="22" fill="#e9edf0" stroke="#c9c9c9" stroke-width="4"/><path d="M4.4 12 L12.2 20.2 L21.4 4" fill="none" stroke="#6c6c6c" stroke-width="3.4"/></svg></div>
<div style="left:1254px;top:1375px"><svg width="36" height="36" viewBox="0 0 36 36"><path d="M4.2 29.6 L20.6 14.6" stroke="#0a5c92" stroke-width="7"/><path d="M4.8 29 L19.6 15.6" stroke="#86acdc" stroke-width="3.4"/><path d="M23 5.4 L28.6 11 L23 16.6 L17.4 11 Z" fill="#cc0000"/><circle cx="23" cy="11" r="4.4" fill="#cc0000"/><circle cx="22.6" cy="11.2" r="1.3" fill="#e78f8f"/><g fill="#f08a00"><rect x="14" y="4" width="6" height="2"/><rect x="22" y="2" width="2" height="2"/><rect x="28" y="2" width="2" height="2"/><rect x="26" y="4" width="2" height="2"/><rect x="30" y="8" width="4" height="2"/><rect x="28" y="14" width="2" height="4"/></g><g fill="#ffe39a"><rect x="14" y="6" width="4" height="1.6"/><rect x="20" y="2" width="2" height="2"/><rect x="30" y="2" width="1.6" height="2"/><rect x="28" y="4" width="1.6" height="2"/><rect x="30" y="10" width="4" height="2"/><rect x="26.4" y="14" width="1.6" height="4"/></g></svg></div>
<div style="left:1912px;top:1381px"><svg width="26" height="26" viewBox="0 0 26 26"><rect x="2" y="2" width="22" height="22" fill="#e9edf0" stroke="#c9c9c9" stroke-width="4"/></svg></div>
<div style="left:1254px;top:1412px"><svg width="36" height="36" viewBox="0 0 36 36"><path d="M4.2 29.6 L20.6 14.6" stroke="#0a5c92" stroke-width="7"/><path d="M4.8 29 L19.6 15.6" stroke="#86acdc" stroke-width="3.4"/><path d="M23 5.4 L28.6 11 L23 16.6 L17.4 11 Z" fill="#cc0000"/><circle cx="23" cy="11" r="4.4" fill="#cc0000"/><circle cx="22.6" cy="11.2" r="1.3" fill="#e78f8f"/><g fill="#f08a00"><rect x="14" y="4" width="6" height="2"/><rect x="22" y="2" width="2" height="2"/><rect x="28" y="2" width="2" height="2"/><rect x="26" y="4" width="2" height="2"/><rect x="30" y="8" width="4" height="2"/><rect x="28" y="14" width="2" height="4"/></g><g fill="#ffe39a"><rect x="14" y="6" width="4" height="1.6"/><rect x="20" y="2" width="2" height="2"/><rect x="30" y="2" width="1.6" height="2"/><rect x="28" y="4" width="1.6" height="2"/><rect x="30" y="10" width="4" height="2"/><rect x="26.4" y="14" width="1.6" height="4"/></g></svg></div>
<div style="left:1912px;top:1418px"><svg width="26" height="26" viewBox="0 0 26 26"><rect x="2" y="2" width="22" height="22" fill="#e9edf0" stroke="#c9c9c9" stroke-width="4"/><path d="M4.4 12 L12.2 20.2 L21.4 4" fill="none" stroke="#6c6c6c" stroke-width="3.4"/></svg></div>
<div style="left:1254px;top:1449px"><svg width="36" height="36" viewBox="0 0 36 36"><path d="M4.2 29.6 L20.6 14.6" stroke="#0a5c92" stroke-width="7"/><path d="M4.8 29 L19.6 15.6" stroke="#86acdc" stroke-width="3.4"/><path d="M23 5.4 L28.6 11 L23 16.6 L17.4 11 Z" fill="#cc0000"/><circle cx="23" cy="11" r="4.4" fill="#cc0000"/><circle cx="22.6" cy="11.2" r="1.3" fill="#e78f8f"/><g fill="#f08a00"><rect x="14" y="4" width="6" height="2"/><rect x="22" y="2" width="2" height="2"/><rect x="28" y="2" width="2" height="2"/><rect x="26" y="4" width="2" height="2"/><rect x="30" y="8" width="4" height="2"/><rect x="28" y="14" width="2" height="4"/></g><g fill="#ffe39a"><rect x="14" y="6" width="4" height="1.6"/><rect x="20" y="2" width="2" height="2"/><rect x="30" y="2" width="1.6" height="2"/><rect x="28" y="4" width="1.6" height="2"/><rect x="30" y="10" width="4" height="2"/><rect x="26.4" y="14" width="1.6" height="4"/></g></svg></div>
<div style="left:1912px;top:1455px"><svg width="26" height="26" viewBox="0 0 26 26"><rect x="2" y="2" width="22" height="22" fill="#e9edf0" stroke="#c9c9c9" stroke-width="4"/><path d="M4.4 12 L12.2 20.2 L21.4 4" fill="none" stroke="#6c6c6c" stroke-width="3.4"/></svg></div>
<div style="left:1254px;top:1486px"><svg width="36" height="36" viewBox="0 0 36 36"><path d="M4.2 29.6 L20.6 14.6" stroke="#0a5c92" stroke-width="7"/><path d="M4.8 29 L19.6 15.6" stroke="#86acdc" stroke-width="3.4"/><path d="M23 5.4 L28.6 11 L23 16.6 L17.4 11 Z" fill="#cc0000"/><circle cx="23" cy="11" r="4.4" fill="#cc0000"/><circle cx="22.6" cy="11.2" r="1.3" fill="#e78f8f"/><g fill="#f08a00"><rect x="14" y="4" width="6" height="2"/><rect x="22" y="2" width="2" height="2"/><rect x="28" y="2" width="2" height="2"/><rect x="26" y="4" width="2" height="2"/><rect x="30" y="8" width="4" height="2"/><rect x="28" y="14" width="2" height="4"/></g><g fill="#ffe39a"><rect x="14" y="6" width="4" height="1.6"/><rect x="20" y="2" width="2" height="2"/><rect x="30" y="2" width="1.6" height="2"/><rect x="28" y="4" width="1.6" height="2"/><rect x="30" y="10" width="4" height="2"/><rect x="26.4" y="14" width="1.6" height="4"/></g></svg></div>
<div style="left:1912px;top:1492px"><svg width="26" height="26" viewBox="0 0 26 26"><rect x="2" y="2" width="22" height="22" fill="#e9edf0" stroke="#c9c9c9" stroke-width="4"/></svg></div>
<div style="left:1254px;top:1523px"><svg width="36" height="36" viewBox="0 0 36 36"><path d="M4.2 29.6 L20.6 14.6" stroke="#0a5c92" stroke-width="7"/><path d="M4.8 29 L19.6 15.6" stroke="#86acdc" stroke-width="3.4"/><path d="M23 5.4 L28.6 11 L23 16.6 L17.4 11 Z" fill="#cc0000"/><circle cx="23" cy="11" r="4.4" fill="#cc0000"/><circle cx="22.6" cy="11.2" r="1.3" fill="#e78f8f"/><g fill="#f08a00"><rect x="14" y="4" width="6" height="2"/><rect x="22" y="2" width="2" height="2"/><rect x="28" y="2" width="2" height="2"/><rect x="26" y="4" width="2" height="2"/><rect x="30" y="8" width="4" height="2"/><rect x="28" y="14" width="2" height="4"/></g><g fill="#ffe39a"><rect x="14" y="6" width="4" height="1.6"/><rect x="20" y="2" width="2" height="2"/><rect x="30" y="2" width="1.6" height="2"/><rect x="28" y="4" width="1.6" height="2"/><rect x="30" y="10" width="4" height="2"/><rect x="26.4" y="14" width="1.6" height="4"/></g></svg></div>
<div style="left:1912px;top:1529px"><svg width="26" height="26" viewBox="0 0 26 26"><rect x="2" y="2" width="22" height="22" fill="#e9edf0" stroke="#c9c9c9" stroke-width="4"/><path d="M4.4 12 L12.2 20.2 L21.4 4" fill="none" stroke="#6c6c6c" stroke-width="3.4"/></svg></div>
<div style="left:1254px;top:1560px"><svg width="36" height="36" viewBox="0 0 36 36"><path d="M4.2 29.6 L20.6 14.6" stroke="#0a5c92" stroke-width="7"/><path d="M4.8 29 L19.6 15.6" stroke="#86acdc" stroke-width="3.4"/><path d="M23 5.4 L28.6 11 L23 16.6 L17.4 11 Z" fill="#cc0000"/><circle cx="23" cy="11" r="4.4" fill="#cc0000"/><circle cx="22.6" cy="11.2" r="1.3" fill="#e78f8f"/><g fill="#f08a00"><rect x="14" y="4" width="6" height="2"/><rect x="22" y="2" width="2" height="2"/><rect x="28" y="2" width="2" height="2"/><rect x="26" y="4" width="2" height="2"/><rect x="30" y="8" width="4" height="2"/><rect x="28" y="14" width="2" height="4"/></g><g fill="#ffe39a"><rect x="14" y="6" width="4" height="1.6"/><rect x="20" y="2" width="2" height="2"/><rect x="30" y="2" width="1.6" height="2"/><rect x="28" y="4" width="1.6" height="2"/><rect x="30" y="10" width="4" height="2"/><rect x="26.4" y="14" width="1.6" height="4"/></g></svg></div>
<div style="left:1912px;top:1566px"><svg width="26" height="26" viewBox="0 0 26 26"><rect x="2" y="2" width="22" height="22" fill="#e9edf0" stroke="#c9c9c9" stroke-width="4"/></svg></div>
<div style="left:2871px;top:786px"><svg width="26" height="42" viewBox="0 0 26 42"><path d="M1 1 V32 L8 25.5 L13.5 38.5 L18 36.5 L12.5 24 H22.5 Z" fill="#fff" stroke="#222" stroke-width="1.3"/></svg></div>
<div id="tx">
<span class="t" style="left:78.20px;top:3px;font-size:25.4px;line-height:44px;letter-spacing:0.28px;color:#ffb81c;-webkit-text-stroke-color:#ffb81c;"><u>L</u>ist</span>
<span class="t" style="left:159.70px;top:3px;font-size:25.4px;line-height:44px;letter-spacing:0.41px;color:#ffb81c;-webkit-text-stroke-color:#ffb81c;"><u>E</u>dit</span>
<span class="t" style="left:246.60px;top:3px;font-size:25.4px;line-height:44px;letter-spacing:0.06px;color:#ffb81c;-webkit-text-stroke-color:#ffb81c;"><u>G</u>oto</span>
<span class="t" style="left:343.00px;top:3px;font-size:25.4px;line-height:44px;letter-spacing:0.46px;color:#ffb81c;-webkit-text-stroke-color:#ffb81c;">V<u>i</u>ews</span>
<span class="t" style="left:450.80px;top:3px;font-size:25.4px;line-height:44px;letter-spacing:0.17px;color:#ffb81c;-webkit-text-stroke-color:#ffb81c;"><u>S</u>ettings</span>
<span class="t" style="left:586.00px;top:3px;font-size:25.4px;line-height:44px;letter-spacing:0.21px;color:#ffb81c;-webkit-text-stroke-color:#ffb81c;">S<u>y</u>stem</span>
<span class="t" style="left:711.60px;top:3px;font-size:25.4px;line-height:44px;letter-spacing:0.14px;color:#ffb81c;-webkit-text-stroke-color:#ffb81c;"><u>H</u>elp</span>
<span class="t" style="left:104.00px;top:81px;font-size:24.4px;line-height:38px;letter-spacing:1.20px;">PRGN_DISPLAY_AUT</span>
<span class="t" style="left:42.50px;top:153px;font-size:36px;line-height:52px;letter-spacing:-1.34px;font-weight:700;-webkit-text-stroke-width:0.25px;text-shadow:none;font-style:italic;font-family:'DejaVu Sans','Liberation Sans',sans-serif;font-stretch:normal;">Display Authorizations of Roles</span>
<span class="t" style="left:49.50px;top:310.0px;font-size:26.67px;line-height:40px;letter-spacing:-0.12px;font-weight:700;-webkit-text-stroke-width:0.25px;text-shadow:none;font-family:'DejaVu Sans','Liberation Sans',sans-serif;font-stretch:normal;">System (Client):</span>
<span class="t" style="left:48.50px;top:345.5px;font-size:26.67px;line-height:40px;letter-spacing:0.79px;font-weight:700;-webkit-text-stroke-width:0.25px;text-shadow:none;font-family:'DejaVu Sans','Liberation Sans',sans-serif;font-stretch:normal;">Date/Time:</span>
<span class="t" style="left:48.50px;top:381.0px;font-size:26.67px;line-height:40px;letter-spacing:0.07px;font-weight:700;-webkit-text-stroke-width:0.25px;text-shadow:none;font-family:'DejaVu Sans','Liberation Sans',sans-serif;font-stretch:normal;">User:</span>
<span class="t" style="left:37.60px;top:448px;font-size:25.4px;line-height:36px;letter-spacing:0.75px;">Role</span>
<span class="t" style="left:220.25px;top:448px;font-size:25.4px;line-height:36px;letter-spacing:0.01px;">Object</span>
<span class="t" style="left:413.75px;top:448px;font-size:25.4px;line-height:36px;letter-spacing:0.09px;">Authorization Object</span>
<span class="t" style="left:983.75px;top:448px;font-size:25.4px;line-height:36px;letter-spacing:0.06px;">Authorization</span>
<span class="t" style="left:1186.00px;top:448px;font-size:25.4px;line-height:36px;letter-spacing:0.33px;">Active/Inactive</span>
<span class="t" style="left:1363.00px;top:448px;font-size:25.4px;line-height:36px;letter-spacing:0.09px;">Activation Status</span>
<span class="t" style="left:1601.00px;top:448px;font-size:25.4px;line-height:36px;letter-spacing:0.22px;">Maintenance Status</span>
<span class="t" style="left:1842.50px;top:448px;font-size:25.4px;line-height:36px;letter-spacing:0.23px;">Field Changed</span>
<span class="t" style="left:2010.00px;top:448px;font-size:25.4px;line-height:36px;letter-spacing:0.37px;">Field Name</span>
<span class="t" style="left:2160.00px;top:448px;font-size:25.4px;line-height:36px;letter-spacing:0.37px;">Field Name</span>
<span class="t" style="left:2368.50px;top:448px;font-size:25.4px;line-height:36px;letter-spacing:0.32px;">Org. Level</span>
<span class="t" style="left:2496.00px;top:448px;font-size:25.4px;line-height:36px;letter-spacing:0.23px;">&#x27;From&#x27; value</span>
<span class="t" style="left:2739.75px;top:448px;font-size:25.4px;line-height:36px;letter-spacing:1.62px;">&#x27;To&#x27;</span>
<span class="t" style="left:37.60px;top:486px;font-size:25.4px;line-height:36px;letter-spacing:0.88px;">BC:T_001_M</span>
<span class="t" style="left:984.75px;top:486px;font-size:25.4px;line-height:36px;letter-spacing:0.15px;">T-DI29001500</span>
<span class="t" style="left:220.10px;top:486px;font-size:25.4px;line-height:36px;letter-spacing:0.91px;">S_DEVELOP</span>
<span class="t" style="left:413.00px;top:486px;font-size:25.4px;line-height:36px;letter-spacing:0.23px;">ABAP Workbench</span>
<span class="t" style="left:1363.00px;top:486px;font-size:25.4px;line-height:36px;letter-spacing:0.09px;">Active Authorization</span>
<span class="t" style="left:1600.60px;top:486px;font-size:25.4px;line-height:36px;letter-spacing:0.17px;">Maintained</span>
<span class="t" style="left:2009.70px;top:486px;font-size:25.4px;line-height:36px;letter-spacing:0.20px;">DEVCLASS</span>
<span class="t" style="left:2159.30px;top:486px;font-size:25.4px;line-height:36px;letter-spacing:0.42px;">Package</span>
<span class="t" style="left:2498.40px;top:485px;font-size:25.4px;line-height:36px;transform:scaleX(1.36);transform-origin:0 0;">*</span>
<span class="t" style="left:1363.00px;top:523px;font-size:25.4px;line-height:36px;letter-spacing:0.09px;">Active Authorization</span>
<span class="t" style="left:2010.70px;top:523px;font-size:25.4px;line-height:36px;letter-spacing:0.97px;">OBJNAME</span>
<span class="t" style="left:2159.30px;top:523px;font-size:25.4px;line-height:36px;letter-spacing:0.59px;">Name</span>
<span class="t" style="left:2498.40px;top:522px;font-size:25.4px;line-height:36px;transform:scaleX(1.36);transform-origin:0 0;">*</span>
<span class="t" style="left:1363.00px;top:560px;font-size:25.4px;line-height:36px;letter-spacing:0.09px;">Active Authorization</span>
<span class="t" style="left:2009.70px;top:560px;font-size:25.4px;line-height:36px;letter-spacing:0.77px;">P_GROUP</span>
<span class="t" style="left:2161.30px;top:560px;font-size:25.4px;line-height:36px;letter-spacing:0.08px;">Authoriz. Group</span>
<span class="t" style="left:2498.40px;top:559px;font-size:25.4px;line-height:36px;transform:scaleX(1.36);transform-origin:0 0;">*</span>
<span class="t" style="left:1363.00px;top:597px;font-size:25.4px;line-height:36px;letter-spacing:0.09px;">Active Authorization</span>
<span class="t" style="left:1601.60px;top:597px;font-size:25.4px;line-height:36px;letter-spacing:-0.11px;">Standard</span>
<span class="t" style="left:2011.70px;top:597px;font-size:25.4px;line-height:36px;letter-spacing:0.35px;">ACTVT</span>
<span class="t" style="left:2161.30px;top:597px;font-size:25.4px;line-height:36px;letter-spacing:-0.28px;">Activity</span>
<span class="t" style="left:2497.70px;top:597px;font-size:25.4px;line-height:36px;letter-spacing:-0.63px;">03</span>
<span class="t" style="left:1363.00px;top:634px;font-size:25.4px;line-height:36px;letter-spacing:0.09px;">Active Authorization</span>
<span class="t" style="left:2010.70px;top:634px;font-size:25.4px;line-height:36px;letter-spacing:1.24px;">OBJTYPE</span>
<span class="t" style="left:2160.30px;top:634px;font-size:25.4px;line-height:36px;letter-spacing:0.54px;">Object Type</span>
<span class="t" style="left:2497.70px;top:634px;font-size:25.4px;line-height:36px;letter-spacing:-0.05px;">SUSO</span>
<span class="t" style="left:220.10px;top:671px;font-size:25.4px;line-height:36px;letter-spacing:1.81px;">S_GUI</span>
<span class="t" style="left:413.00px;top:671px;font-size:25.4px;line-height:36px;letter-spacing:0.15px;">Authorization for GUI activities</span>
<span class="t" style="left:1363.00px;top:671px;font-size:25.4px;line-height:36px;letter-spacing:0.09px;">Active Authorization</span>
<span class="t" style="left:2011.70px;top:671px;font-size:25.4px;line-height:36px;letter-spacing:0.35px;">ACTVT</span>
<span class="t" style="left:2161.30px;top:671px;font-size:25.4px;line-height:36px;letter-spacing:-0.28px;">Activity</span>
<span class="t" style="left:2497.70px;top:671px;font-size:25.4px;line-height:36px;letter-spacing:-0.63px;">61</span>
<span class="t" style="left:220.10px;top:708px;font-size:25.4px;line-height:36px;letter-spacing:0.86px;">S_SPO_ACT</span>
<span class="t" style="left:412.00px;top:708px;font-size:25.4px;line-height:36px;letter-spacing:0.30px;">Spool: Actions</span>
<span class="t" style="left:1363.00px;top:708px;font-size:25.4px;line-height:36px;letter-spacing:0.09px;">Active Authorization</span>
<span class="t" style="left:1600.60px;top:708px;font-size:25.4px;line-height:36px;letter-spacing:0.17px;">Maintained</span>
<span class="t" style="left:2010.70px;top:708px;font-size:25.4px;line-height:36px;letter-spacing:0.65px;">SPOAUTH</span>
<span class="t" style="left:2161.30px;top:708px;font-size:25.4px;line-height:36px;letter-spacing:0.06px;">Authorization</span>
<span class="t" style="left:2498.40px;top:707px;font-size:25.4px;line-height:36px;transform:scaleX(1.36);transform-origin:0 0;">*</span>
<span class="t" style="left:1363.00px;top:745px;font-size:25.4px;line-height:36px;letter-spacing:0.09px;">Active Authorization</span>
<span class="t" style="left:1601.60px;top:745px;font-size:25.4px;line-height:36px;letter-spacing:-0.11px;">Standard</span>
<span class="t" style="left:2010.70px;top:745px;font-size:25.4px;line-height:36px;letter-spacing:0.79px;">SPOACTION</span>
<span class="t" style="left:2161.30px;top:745px;font-size:25.4px;line-height:36px;letter-spacing:0.02px;">Action</span>
<span class="t" style="left:2498.70px;top:745px;font-size:25.4px;line-height:36px;letter-spacing:1.30px;">ATTR</span>
<span class="t" style="left:1363.00px;top:782px;font-size:25.4px;line-height:36px;letter-spacing:0.09px;">Active Authorization</span>
<span class="t" style="left:2496.70px;top:782px;font-size:25.4px;line-height:36px;letter-spacing:0.57px;">BASE</span>
<span class="t" style="left:1363.00px;top:819px;font-size:25.4px;line-height:36px;letter-spacing:0.09px;">Active Authorization</span>
<span class="t" style="left:2496.70px;top:819px;font-size:25.4px;line-height:36px;letter-spacing:1.22px;">DELE</span>
<span class="t" style="left:1363.00px;top:856px;font-size:25.4px;line-height:36px;letter-spacing:0.09px;">Active Authorization</span>
<span class="t" style="left:2496.70px;top:856px;font-size:25.4px;line-height:36px;letter-spacing:2.14px;">REDI</span>
<span class="t" style="left:1363.00px;top:893px;font-size:25.4px;line-height:36px;letter-spacing:0.09px;">Active Authorization</span>
<span class="t" style="left:2496.70px;top:893px;font-size:25.4px;line-height:36px;letter-spacing:0.64px;">REPR</span>
<span class="t" style="left:220.10px;top:930px;font-size:25.4px;line-height:36px;letter-spacing:0.70px;">S_SPO_DEV</span>
<span class="t" style="left:412.00px;top:930px;font-size:25.4px;line-height:36px;letter-spacing:0.12px;">Spool: Device authorizations</span>
<span class="t" style="left:1363.00px;top:930px;font-size:25.4px;line-height:36px;letter-spacing:0.09px;">Active Authorization</span>
<span class="t" style="left:1600.60px;top:930px;font-size:25.4px;line-height:36px;letter-spacing:0.17px;">Maintained</span>
<span class="t" style="left:2010.70px;top:930px;font-size:25.4px;line-height:36px;letter-spacing:0.73px;">SPODEVICE</span>
<span class="t" style="left:2160.30px;top:930px;font-size:25.4px;line-height:36px;letter-spacing:0.14px;">Output Device</span>
<span class="t" style="left:2498.40px;top:929px;font-size:25.4px;line-height:36px;transform:scaleX(1.36);transform-origin:0 0;">*</span>
<span class="t" style="left:220.10px;top:967px;font-size:25.4px;line-height:36px;letter-spacing:0.96px;">S_SPO_PAGE</span>
<span class="t" style="left:412.00px;top:967px;font-size:25.4px;line-height:36px;letter-spacing:0.16px;">Spool: Restriction on Maximum Number of Pages</span>
<span class="t" style="left:1363.00px;top:967px;font-size:25.4px;line-height:36px;letter-spacing:0.09px;">Active Authorization</span>
<span class="t" style="left:2498.40px;top:966px;font-size:25.4px;line-height:36px;transform:scaleX(1.36);transform-origin:0 0;">*</span>
<span class="t" style="left:1363.00px;top:1004px;font-size:25.4px;line-height:36px;letter-spacing:0.09px;">Active Authorization</span>
<span class="t" style="left:2010.70px;top:1004px;font-size:25.4px;line-height:36px;letter-spacing:0.24px;">SPOPAGES</span>
<span class="t" style="left:2159.30px;top:1004px;font-size:25.4px;line-height:36px;letter-spacing:0.22px;">Page number</span>
<span class="t" style="left:2498.40px;top:1003px;font-size:25.4px;line-height:36px;transform:scaleX(1.36);transform-origin:0 0;">*</span>
<span class="t" style="left:220.10px;top:1041px;font-size:25.4px;line-height:36px;letter-spacing:1.20px;">S_TCODE</span>
<span class="t" style="left:414.00px;top:1041px;font-size:25.4px;line-height:36px;letter-spacing:0.24px;">Transaction Code Check at Transaction Start</span>
<span class="t" style="left:1363.00px;top:1041px;font-size:25.4px;line-height:36px;letter-spacing:0.09px;">Active Authorization</span>
<span class="t" style="left:1601.60px;top:1041px;font-size:25.4px;line-height:36px;letter-spacing:-0.11px;">Standard</span>
<span class="t" style="left:2012.70px;top:1041px;font-size:25.4px;line-height:36px;letter-spacing:0.54px;">TCD</span>
<span class="t" style="left:2162.30px;top:1041px;font-size:25.4px;line-height:36px;letter-spacing:0.24px;">Transaction Code</span>
<span class="t" style="left:2497.70px;top:1041px;font-size:25.4px;line-height:36px;letter-spacing:0.66px;">SEARCH_SAP_MENU</span>
<span class="t" style="left:1363.00px;top:1078px;font-size:25.4px;line-height:36px;letter-spacing:0.09px;">Active Authorization</span>
<span class="t" style="left:2497.70px;top:1078px;font-size:25.4px;line-height:36px;letter-spacing:0.52px;">SESSION_MANAGER</span>
<span class="t" style="left:1363.00px;top:1115px;font-size:25.4px;line-height:36px;letter-spacing:0.09px;">Active Authorization</span>
<span class="t" style="left:2497.70px;top:1115px;font-size:25.4px;line-height:36px;letter-spacing:-0.21px;">SMX</span>
<span class="t" style="left:1363.00px;top:1152px;font-size:25.4px;line-height:36px;letter-spacing:0.09px;">Active Authorization</span>
<span class="t" style="left:2497.70px;top:1152px;font-size:25.4px;line-height:36px;letter-spacing:-0.45px;">SMXX</span>
<span class="t" style="left:1363.00px;top:1189px;font-size:25.4px;line-height:36px;letter-spacing:0.09px;">Active Authorization</span>
<span class="t" style="left:2497.70px;top:1189px;font-size:25.4px;line-height:36px;letter-spacing:-0.20px;">SP02</span>
<span class="t" style="left:1363.00px;top:1226px;font-size:25.4px;line-height:36px;letter-spacing:0.09px;">Active Authorization</span>
<span class="t" style="left:2497.70px;top:1226px;font-size:25.4px;line-height:36px;letter-spacing:-0.49px;">SU50</span>
<span class="t" style="left:1363.00px;top:1263px;font-size:25.4px;line-height:36px;letter-spacing:0.09px;">Active Authorization</span>
<span class="t" style="left:2497.70px;top:1263px;font-size:25.4px;line-height:36px;letter-spacing:-0.45px;">SU53</span>
<span class="t" style="left:1363.00px;top:1300px;font-size:25.4px;line-height:36px;letter-spacing:0.09px;">Active Authorization</span>
<span class="t" style="left:2497.70px;top:1300px;font-size:25.4px;line-height:36px;letter-spacing:-0.49px;">SU56</span>
<span class="t" style="left:220.10px;top:1337px;font-size:25.4px;line-height:36px;letter-spacing:0.63px;">S_USER_AGR</span>
<span class="t" style="left:413.00px;top:1337px;font-size:25.4px;line-height:36px;letter-spacing:0.17px;">Authorizations: Role Check</span>
<span class="t" style="left:1363.00px;top:1337px;font-size:25.4px;line-height:36px;letter-spacing:0.09px;">Active Authorization</span>
<span class="t" style="left:1600.60px;top:1337px;font-size:25.4px;line-height:36px;letter-spacing:0.17px;">Maintained</span>
<span class="t" style="left:2011.70px;top:1337px;font-size:25.4px;line-height:36px;letter-spacing:0.53px;">ACT_GROUP</span>
<span class="t" style="left:2159.30px;top:1337px;font-size:25.4px;line-height:36px;letter-spacing:0.75px;">Role</span>
<span class="t" style="left:2498.40px;top:1336px;font-size:25.4px;line-height:36px;transform:scaleX(1.36);transform-origin:0 0;">*</span>
<span class="t" style="left:1363.00px;top:1374px;font-size:25.4px;line-height:36px;letter-spacing:0.09px;">Active Authorization</span>
<span class="t" style="left:1601.60px;top:1374px;font-size:25.4px;line-height:36px;letter-spacing:-0.11px;">Standard</span>
<span class="t" style="left:2011.70px;top:1374px;font-size:25.4px;line-height:36px;letter-spacing:0.35px;">ACTVT</span>
<span class="t" style="left:2161.30px;top:1374px;font-size:25.4px;line-height:36px;letter-spacing:-0.28px;">Activity</span>
<span class="t" style="left:2497.70px;top:1374px;font-size:25.4px;line-height:36px;letter-spacing:-0.63px;">03</span>
<span class="t" style="left:220.10px;top:1411px;font-size:25.4px;line-height:36px;letter-spacing:0.80px;">S_USER_AUT</span>
<span class="t" style="left:412.00px;top:1411px;font-size:25.4px;line-height:36px;letter-spacing:0.19px;">User Master Maintenance: Authorizations</span>
<span class="t" style="left:1363.00px;top:1411px;font-size:25.4px;line-height:36px;letter-spacing:0.09px;">Active Authorization</span>
<span class="t" style="left:1600.60px;top:1411px;font-size:25.4px;line-height:36px;letter-spacing:0.17px;">Maintained</span>
<span class="t" style="left:2011.70px;top:1411px;font-size:25.4px;line-height:36px;letter-spacing:0.90px;">AUTH</span>
<span class="t" style="left:2161.30px;top:1411px;font-size:25.4px;line-height:36px;letter-spacing:0.06px;">Authorization</span>
<span class="t" style="left:2498.40px;top:1410px;font-size:25.4px;line-height:36px;transform:scaleX(1.36);transform-origin:0 0;">*</span>
<span class="t" style="left:1363.00px;top:1448px;font-size:25.4px;line-height:36px;letter-spacing:0.09px;">Active Authorization</span>
<span class="t" style="left:2010.70px;top:1448px;font-size:25.4px;line-height:36px;letter-spacing:0.91px;">OBJECT</span>
<span class="t" style="left:2160.30px;top:1448px;font-size:25.4px;line-height:36px;letter-spacing:0.01px;">Object</span>
<span class="t" style="left:2498.40px;top:1447px;font-size:25.4px;line-height:36px;transform:scaleX(1.36);transform-origin:0 0;">*</span>
<span class="t" style="left:1363.00px;top:1485px;font-size:25.4px;line-height:36px;letter-spacing:0.09px;">Active Authorization</span>
<span class="t" style="left:1601.60px;top:1485px;font-size:25.4px;line-height:36px;letter-spacing:-0.11px;">Standard</span>
<span class="t" style="left:2011.70px;top:1485px;font-size:25.4px;line-height:36px;letter-spacing:0.35px;">ACTVT</span>
<span class="t" style="left:2161.30px;top:1485px;font-size:25.4px;line-height:36px;letter-spacing:-0.28px;">Activity</span>
<span class="t" style="left:2497.70px;top:1485px;font-size:25.4px;line-height:36px;letter-spacing:-0.63px;">03</span>
<span class="t" style="left:220.10px;top:1522px;font-size:25.4px;line-height:36px;letter-spacing:0.71px;">S_USER_GRP</span>
<span class="t" style="left:412.00px;top:1522px;font-size:25.4px;line-height:36px;letter-spacing:0.18px;">User Master Maintenance: User Groups</span>
<span class="t" style="left:1363.00px;top:1522px;font-size:25.4px;line-height:36px;letter-spacing:0.09px;">Active Authorization</span>
<span class="t" style="left:1600.60px;top:1522px;font-size:25.4px;line-height:36px;letter-spacing:0.17px;">Maintained</span>
<span class="t" style="left:2010.70px;top:1522px;font-size:25.4px;line-height:36px;letter-spacing:-0.20px;">CLASS</span>
<span class="t" style="left:2160.30px;top:1522px;font-size:25.4px;line-height:36px;letter-spacing:0.02px;">User group</span>
<span class="t" style="left:2498.40px;top:1521px;font-size:25.4px;line-height:36px;transform:scaleX(1.36);transform-origin:0 0;">*</span>
<span class="t" style="left:1363.00px;top:1559px;font-size:25.4px;line-height:36px;letter-spacing:0.09px;">Active Authorization</span>
<span class="t" style="left:1601.60px;top:1559px;font-size:25.4px;line-height:36px;letter-spacing:-0.11px;">Standard</span>
<span class="t" style="left:2011.70px;top:1559px;font-size:25.4px;line-height:36px;letter-spacing:0.35px;">ACTVT</span>
<span class="t" style="left:2161.30px;top:1559px;font-size:25.4px;line-height:36px;letter-spacing:-0.28px;">Activity</span>
<span class="t" style="left:2497.70px;top:1559px;font-size:25.4px;line-height:36px;letter-spacing:-0.63px;">03</span>
</div>
</body></html>
